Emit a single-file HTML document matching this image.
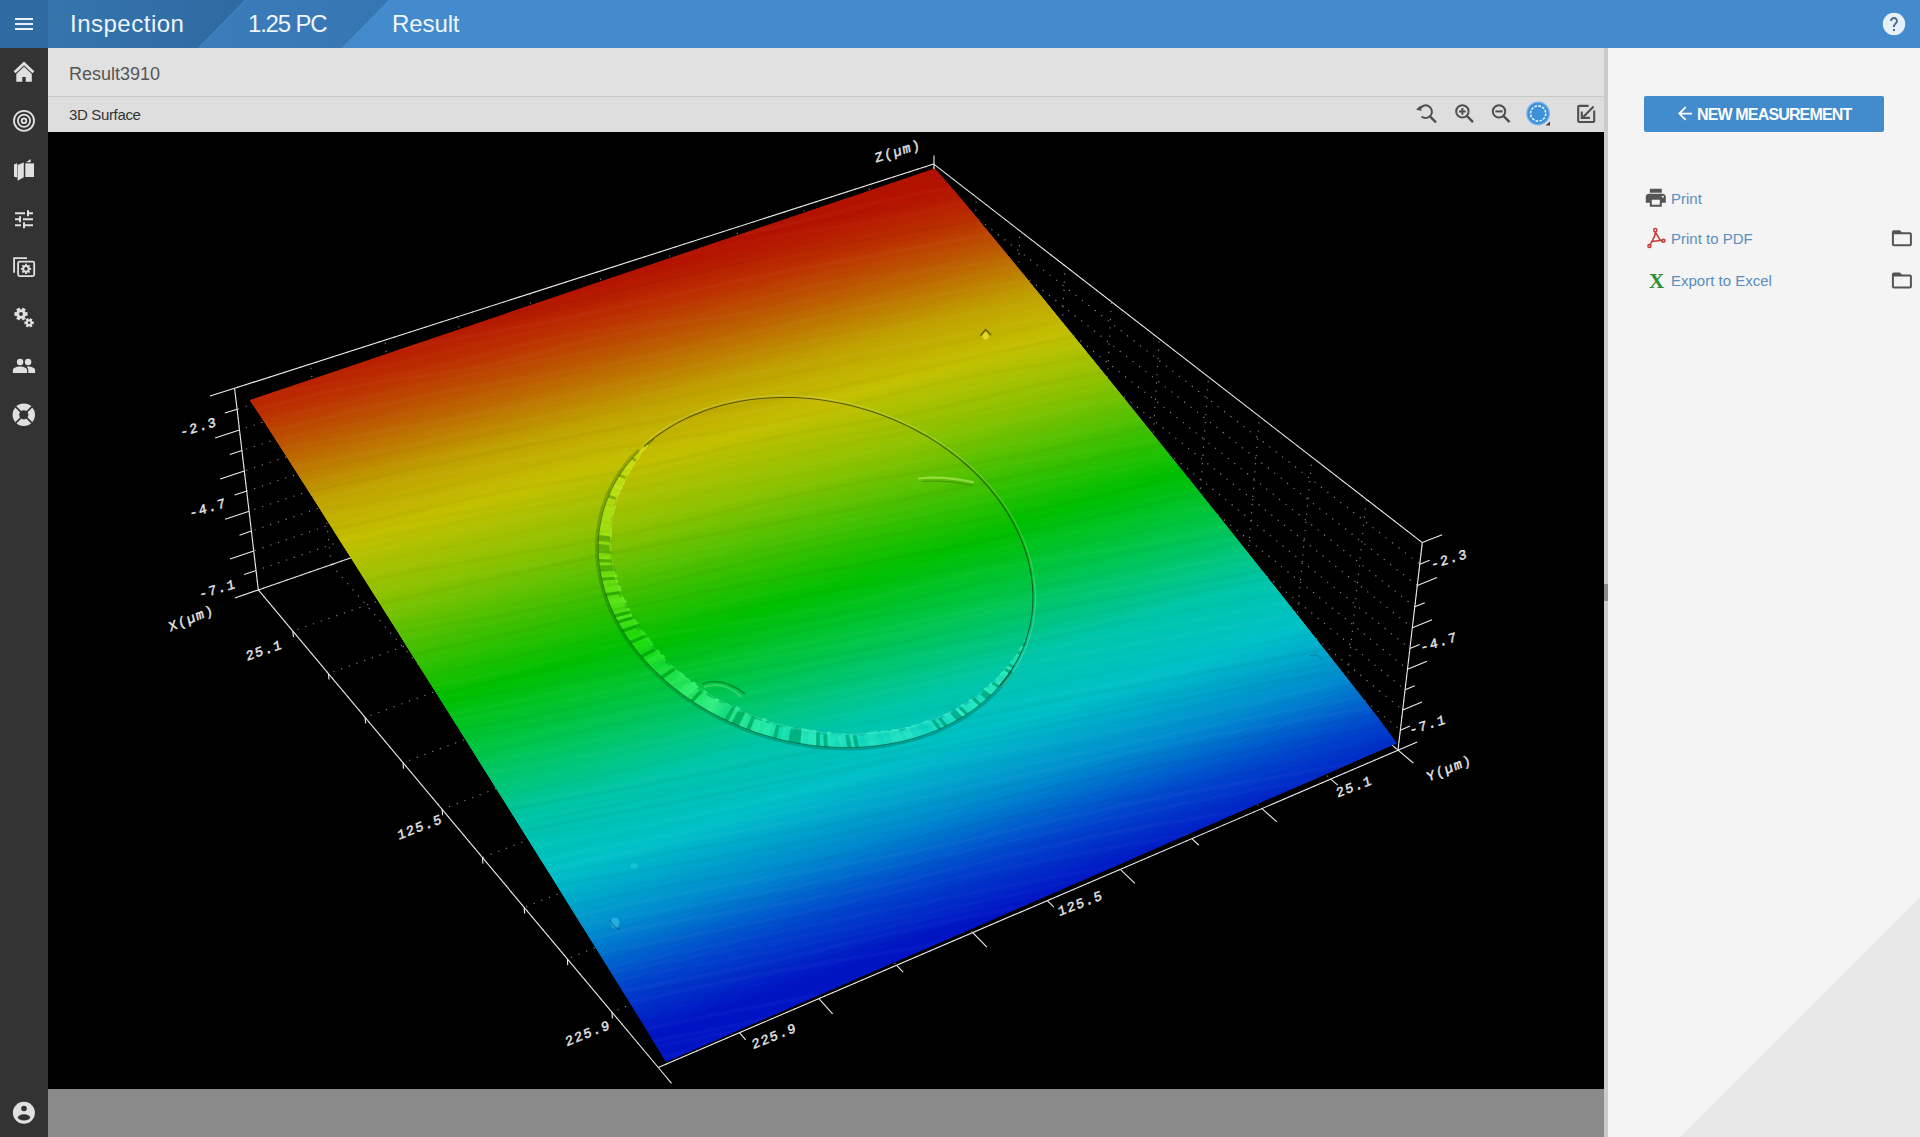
<!DOCTYPE html>
<html><head><meta charset="utf-8">
<style>
*{box-sizing:border-box;margin:0;padding:0}
html,body{width:1920px;height:1137px;overflow:hidden;background:#f4f4f4;font-family:"Liberation Sans",sans-serif}
#hdr{position:absolute;left:0;top:0;width:1920px;height:48px;background:#438bcd}
#hdr svg{position:absolute;left:0;top:0}
.crumb{position:absolute;top:0;height:48px;line-height:48px;color:#eef5fc;font-size:24px;white-space:nowrap}
#side{position:absolute;left:0;top:48px;width:48px;height:1089px;background:#333333}
#side svg{position:absolute;left:0;top:-48px}
#title{position:absolute;left:48px;top:48px;width:1556px;height:49px;background:#e1e1e1;border-bottom:1px solid #c9c9c9}
#title span{position:absolute;left:21px;top:15px;font-size:18px;color:#555;line-height:22px}
#tool{position:absolute;left:48px;top:97px;width:1556px;height:35px;background:#dedede}
#tool span{position:absolute;left:21px;top:9px;font-size:15px;color:#333;line-height:18px;letter-spacing:-0.35px}
#tool svg{position:absolute;left:0;top:0}
#plot{position:absolute;left:48px;top:132px;width:1556px;height:957px;background:#000}
#plot svg{position:absolute;left:0;top:0}
#bot{position:absolute;left:48px;top:1089px;width:1556px;height:48px;background:#8a8a8a}
#scr{position:absolute;left:1604px;top:48px;width:4px;height:1089px;background:#cbcbcb}
#thumb{position:absolute;left:1604px;top:584px;width:4px;height:17px;background:#8c8c8c}
#rp{position:absolute;left:1608px;top:48px;width:312px;height:1089px;background:#f4f4f4;overflow:hidden}
#rp svg{position:absolute;left:0;top:0}
#btn{position:absolute;left:36px;top:48px;width:240px;height:36px;background:#428bcd;border-radius:2px;color:#fff;font-weight:bold;font-size:16px;line-height:37px}
#btn span{position:absolute;left:53px;top:0;letter-spacing:-0.85px}
.it{position:absolute;left:63px;font-size:15px;color:#5b8dbf;line-height:18px;white-space:nowrap;margin-top:1px}
</style></head><body>
<div id="hdr">
<svg width="1920" height="48">
<defs>
<linearGradient id="g1" x1="0" x2="1" y1="0" y2="0"><stop offset="0" stop-color="#3574ad"/><stop offset="1" stop-color="#2f6aa2"/></linearGradient>
<linearGradient id="g2" x1="0" x2="1" y1="0" y2="0"><stop offset="0" stop-color="#3e82c1"/><stop offset="1" stop-color="#3676b2"/></linearGradient>
</defs>
<rect x="0" y="0" width="1920" height="48" fill="#438bcd"/>
<path d="M48 0H389.4L342.5 48H48z" fill="url(#g2)"/>
<path d="M48 0H245.6L198.7 48H48z" fill="url(#g1)"/>
<rect x="0" y="0" width="48" height="48" fill="#306aa2"/>
<path d="M245.6 0L198.7 48" stroke="#5a9ad6" stroke-width="1" opacity="0.6"/>
<path d="M389.4 0L342.5 48" stroke="#5a9ad6" stroke-width="1" opacity="0.6"/>
<rect x="15" y="18" width="18" height="2" fill="#e8f1fa"/>
<rect x="15" y="23" width="18" height="2" fill="#e8f1fa"/>
<rect x="15" y="28" width="18" height="2" fill="#e8f1fa"/>
<circle cx="1894" cy="24" r="11.2" fill="#e6f0fa"/>
<g transform="translate(1882.1 12.1) scale(0.99)" fill="#47698c"><path d="M13 19h-2v-2h2v2zm2.07-7.75l-.9.92C13.45 12.9 13 13.5 13 15h-2v-.5c0-1.1.45-2.1 1.17-2.83l1.24-1.26c.37-.36.59-.86.59-1.41 0-1.1-.9-2-2-2s-2 .9-2 2H8c0-2.21 1.79-4 4-4s4 1.79 4 4c0 .88-.36 1.68-.93 2.25z"/></g>
</svg>
<div class="crumb" style="left:70px;letter-spacing:0.5px">Inspection</div>
<div class="crumb" style="left:248px;letter-spacing:-1.2px">1.25 PC</div>
<div class="crumb" style="left:392px;letter-spacing:-0.1px">Result</div>
</div>
<div id="side">
<svg width="48" height="1137">
<g fill="#e0e0e0">
<path d="M14.6 72.2L24 63.4L33.4 72.2" fill="none" stroke="#e0e0e0" stroke-width="2.8"/>
<path d="M16.3 74L24 66.8L31.8 74V81.8H25.7V77H22.3V81.8H16.3z"/>
</g>
<g fill="none" stroke="#e0e0e0" stroke-width="1.8">
<circle cx="24" cy="120.8" r="10"/>
<circle cx="24" cy="120.8" r="6.1"/>
<circle cx="24" cy="120.8" r="2.3"/>
</g>
<g fill="#e0e0e0">
<path d="M14 164.5L17.2 163.2V177.5L14 176.8z"/>
<path d="M17.6 165L23.8 162.6V177.2L17.6 180.8z"/>
<path d="M25.3 163.4H34V177H25.3z"/>
<path d="M26.2 162.2L30.6 158.9V162.2z"/>
</g>
<g transform="translate(12 207.3)" fill="#e0e0e0"><path d="M3 17v2h6v-2H3zM3 5v2h10V5H3zm10 16v-2h8v-2h-8v-2h-2v6h2zM7 9v2H3v2h4v2h2V9H7zm14 4v-2H11v2h10zm-6-4h2V7h4V5h-4V3h-2v6z"/></g>
<g fill="none" stroke="#e0e0e0" stroke-width="1.8">
<path d="M14.1 272.8V258.2H27"/>
<rect x="18.1" y="261.7" width="16.1" height="14.4" rx="1.5"/>
</g>
<g fill="#e0e0e0" transform="translate(26 268.9)">
<path fill-rule="evenodd" d="M3.81 -0.82L5.12 -0.91L5.12 0.91L3.81 0.82L3.28 2.12L4.27 2.97L2.97 4.27L2.12 3.28L0.82 3.81L0.91 5.12L-0.91 5.12L-0.82 3.81L-2.12 3.28L-2.97 4.27L-4.27 2.97L-3.28 2.12L-3.81 0.82L-5.12 0.91L-5.12 -0.91L-3.81 -0.82L-3.28 -2.12L-4.27 -2.97L-2.97 -4.27L-2.12 -3.28L-0.82 -3.81L-0.91 -5.12L0.91 -5.12L0.82 -3.81L2.12 -3.28L2.97 -4.27L4.27 -2.97L3.28 -2.12zM1.80 0a1.80 1.80 0 1 0 -3.60 0a1.80 1.80 0 1 0 3.60 0z"/>
</g>
<g fill="#e0e0e0" transform="translate(21 314)">
<path fill-rule="evenodd" d="M4.61 -1.66L6.52 -1.93L6.52 1.93L4.61 1.66L3.74 3.16L4.93 4.68L1.59 6.61L0.87 4.82L-0.87 4.82L-1.59 6.61L-4.93 4.68L-3.74 3.16L-4.61 1.66L-6.52 1.93L-6.52 -1.93L-4.61 -1.66L-3.74 -3.16L-4.93 -4.68L-1.59 -6.61L-0.87 -4.82L0.87 -4.82L1.59 -6.61L4.93 -4.68L3.74 -3.16zM1.90 0a1.90 1.90 0 1 0 -3.80 0a1.90 1.90 0 1 0 3.80 0z"/>
</g>
<g fill="#e0e0e0" transform="translate(29.1 322.8)">
<path fill-rule="evenodd" d="M3.29 -1.19L4.70 -1.39L4.70 1.39L3.29 1.19L2.67 2.26L3.55 3.37L1.14 4.76L0.62 3.44L-0.62 3.44L-1.14 4.76L-3.55 3.37L-2.67 2.26L-3.29 1.19L-4.70 1.39L-4.70 -1.39L-3.29 -1.19L-2.67 -2.26L-3.55 -3.37L-1.14 -4.76L-0.62 -3.44L0.62 -3.44L1.14 -4.76L3.55 -3.37L2.67 -2.26zM1.30 0a1.30 1.30 0 1 0 -2.60 0a1.30 1.30 0 1 0 2.60 0z"/>
</g>
<g fill="#e0e0e0">
<circle cx="20.1" cy="362" r="3.2"/>
<circle cx="28.1" cy="362" r="3.2"/>
<path d="M12.9 372.9V370.3C12.9 367.9 16.8 366.6 20 366.6C23.2 366.6 27.1 367.9 27.1 370.3V372.9z"/>
<path d="M28.3 372.9V370.3C28.3 368.8 27.8 367.6 26.6 366.8C27.2 366.7 27.6 366.6 28.1 366.6C31.3 366.6 35.1 367.9 35.1 370.3V372.9z"/>
</g>
<g>
<circle cx="23.8" cy="414.8" r="11.2" fill="#e0e0e0"/>
<circle cx="23.8" cy="414.8" r="4.6" fill="#333"/>
<path d="M15.8 406.8L31.8 422.8M31.8 406.8L15.8 422.8" stroke="#333" stroke-width="1.7"/>
</g>
<g>
<circle cx="23.9" cy="1112.8" r="11" fill="#e0e0e0"/>
<circle cx="24" cy="1108.5" r="2.8" fill="#333"/>
<ellipse cx="24" cy="1117.4" rx="6.1" ry="3.1" fill="#333"/>
</g>

</svg>
</div>
<div id="title"><span>Result3910</span></div>
<div id="tool"><span>3D Surface</span>
<svg width="1556" height="35">
<g transform="translate(-48 -97)"><g fill="none" stroke="#505050" stroke-width="2">
<path d="M1419.8 109.2A6.3 6.3 0 1 1 1421.5 116.4"/>
<path d="M1430.2 116.6L1436 122.4" stroke-width="2.4"/>
<circle cx="1462.4" cy="111.4" r="6.2"/>
<path d="M1466.8 115.8L1473 122.2" stroke-width="2.4"/>
<path d="M1459 111.4H1465.8M1462.4 108V114.8"/>
<circle cx="1499" cy="111.4" r="6.2"/>
<path d="M1503.4 115.8L1509.6 122.2" stroke-width="2.4"/>
<path d="M1495.4 111.4H1502.6"/>
<path d="M1588.6 105.9H1579.2Q1578.2 105.9 1578.2 106.9V121Q1578.2 122 1579.2 122H1593.2Q1594.2 122 1594.2 121V110.6" stroke-width="2.1"/>
<path d="M1593.6 106.6L1582 118.2" stroke-width="2.1"/><path d="M1581.8 111.6V117.9H1589.9" stroke-width="2.1"/>
</g>
<path d="M1416 109.5L1420.3 105.7L1421.6 111z" fill="#505050"/>
<circle cx="1538.1" cy="113.5" r="11.3" fill="#3e90d8" stroke="#7ab6ea" stroke-width="1.2"/>
<circle cx="1538.1" cy="113.5" r="7.6" fill="none" stroke="#e8f3fc" stroke-width="1.6" stroke-dasharray="2.6 1.38"/>
<path d="M1545.5 125.6H1550V121.4z" fill="#4a3a30"/>
</g>
</svg>
</div>
<div id="plot">
<svg width="1556" height="957" viewBox="48 132 1556 957">
<g stroke="#8a8a8a" stroke-width="1.1" stroke-dasharray="1.2 7" fill="none"><path d="M930.3,356.8L258.3,589.9" /><path d="M930.3,356.8L1398,750.2" /><path d="M930.3,356.8L933.7,164.1" /><path d="M930.3,356.8L933.7,164.1" /><path d="M971.2,391.2L292.8,631.2" /><path d="M868.2,378.3L1330.7,779.1" /><path d="M868.2,378.3L869.3,184.7" /><path d="M971.2,391.2L976.2,197" /><path d="M1013.2,426.5L328.4,673.6" /><path d="M805.1,400.2L1261.9,808.6" /><path d="M805.1,400.2L803.9,205.7" /><path d="M1013.2,426.5L1019.9,230.9" /><path d="M1056.5,462.9L365.1,717.4" /><path d="M740.9,422.5L1191.8,838.7" /><path d="M740.9,422.5L737.2,227.1" /><path d="M1056.5,462.9L1065,265.8" /><path d="M1101,500.4L403,762.7" /><path d="M675.6,445.1L1120.3,869.3" /><path d="M675.6,445.1L669.3,248.9" /><path d="M1101,500.4L1111.4,301.8" /><path d="M1146.9,539L442.1,809.3" /><path d="M609.2,468.2L1047.3,900.7" /><path d="M609.2,468.2L600.2,271" /><path d="M1146.9,539L1159.2,338.8" /><path d="M1194.1,578.7L482.5,857.6" /><path d="M541.5,491.7L972.7,932.6" /><path d="M541.5,491.7L529.8,293.6" /><path d="M1194.1,578.7L1208.6,377" /><path d="M1242.7,619.6L524.2,907.4" /><path d="M472.6,515.6L896.6,965.3" /><path d="M472.6,515.6L458.1,316.6" /><path d="M1242.7,619.6L1259.5,416.5" /><path d="M1292.9,661.8L567.4,959" /><path d="M402.5,539.9L818.9,998.6" /><path d="M402.5,539.9L385,340" /><path d="M1292.9,661.8L1312,457.2" /><path d="M1344.6,705.3L612,1012.3" /><path d="M331.1,564.7L739.4,1032.7" /><path d="M331.1,564.7L310.5,363.9" /><path d="M1344.6,705.3L1366.3,499.2" /><path d="M1398,750.2L658.3,1067.5" /><path d="M258.3,589.9L658.3,1067.5" /><path d="M258.3,589.9L234.6,388.3" /><path d="M1398,750.2L1422.3,542.6" /><path d="M930.3,356.8L258.3,589.9" /><path d="M930.3,356.8L1398,750.2" /><path d="M930.6,338.1L256.1,570.5" /><path d="M930.6,338.1L1400.4,730.2" /><path d="M930.9,319.3L253.7,550.9" /><path d="M930.9,319.3L1402.7,710.1" /><path d="M931.2,300.4L251.4,531.1" /><path d="M931.2,300.4L1405.1,689.8" /><path d="M931.6,281.4L249.1,511.2" /><path d="M931.6,281.4L1407.5,669.3" /><path d="M931.9,262.2L246.7,491.1" /><path d="M931.9,262.2L1409.9,648.6" /><path d="M932.3,242.9L244.3,470.9" /><path d="M932.3,242.9L1412.4,627.8" /><path d="M932.6,223.4L241.9,450.5" /><path d="M932.6,223.4L1414.8,606.8" /><path d="M933,203.8L239.5,429.9" /><path d="M933,203.8L1417.3,585.6" /><path d="M933.3,184L237.1,409.2" /><path d="M933.3,184L1419.8,564.2" /><path d="M933.7,164.1L234.6,388.3" /><path d="M933.7,164.1L1422.3,542.6" /></g>
<g stroke="#e6e6e6" stroke-width="1.1" fill="none"><path d="M258.3,589.9L930.3,356.8" /><path d="M1398,750.2L930.3,356.8" /></g>
<clipPath id="sq"><path d="M249.6,400.3L280.5,389.8L311.2,379.5L341.6,369.2L371.9,358.9L401.9,348.8L431.7,338.7L461.4,328.7L490.8,318.7L520,308.8L549,299L577.8,289.3L606.4,279.6L634.8,270L663,260.5L691,251L718.8,241.6L746.5,232.2L773.9,222.9L801.2,213.7L828.3,204.5L855.2,195.4L881.9,186.4L908.4,177.4L934.8,168.5L953.8,190L972,211.6L990.1,233.4L1008.2,255.5L1026.5,277.7L1044.8,300.2L1063.3,322.9L1081.9,345.7L1100.6,368.8L1119.4,392.1L1138.4,415.7L1157.5,439.4L1176.8,463.4L1196.2,487.6L1215.8,512.1L1235.5,536.8L1255.3,561.7L1275.3,586.8L1295.4,612.3L1315.7,637.9L1336.1,663.9L1356.6,690L1377.2,716.5L1396.9,743.2L1369,755.3L1341,767.6L1312.7,779.9L1284.2,792.3L1255.5,804.8L1226.6,817.5L1197.4,830.2L1168.1,843L1138.5,855.9L1108.7,868.9L1078.6,882L1048.3,895.2L1017.8,908.5L987.1,921.9L956.1,935.4L924.8,949L893.3,962.8L861.6,976.6L829.6,990.5L797.3,1004.6L764.8,1018.8L732,1033.1L699,1047.5L665.7,1062L647,1030.9L628,1000.2L609.2,969.8L590.5,939.8L571.9,910L553.6,880.6L535.4,851.5L517.4,822.7L499.5,794.2L481.8,766L464.3,738.1L447,710.5L429.8,683.2L412.7,656.2L395.9,629.4L379.1,602.9L362.6,576.7L346.1,550.7L329.8,525L313.7,499.6L297.6,474.4L281.7,449.4L265.8,424.8z"/></clipPath>
<g clip-path="url(#sq)"><path d="M220.5,354L930.7,163.4L936.4,169.9L225.1,361.4z" fill="#b41200"/><path d="M222.8,357.7L933.3,166.7L939.4,173.2L227.4,365.1z" fill="#b41200"/><path d="M225.1,361.4L936.4,169.9L942.3,176.5L229.8,368.8z" fill="#b41200"/><path d="M227.4,365.1L939.4,173.2L945.2,179.8L232.1,372.5z" fill="#b41200"/><path d="M229.8,368.8L942.3,176.5L948,183.1L234.4,376.2z" fill="#b41200"/><path d="M232.1,372.5L945.2,179.8L950.9,186.4L236.8,379.9z" fill="#b41200"/><path d="M234.4,376.2L948,183.1L953.7,189.8L239.1,383.6z" fill="#b41200"/><path d="M236.8,379.9L950.9,186.4L956.5,193.1L241.4,387.3z" fill="#b41400"/><path d="M239.1,383.6L953.7,189.8L959.3,196.4L243.8,391z" fill="#b51700"/><path d="M241.4,387.3L956.5,193.1L962,199.7L246.1,394.8z" fill="#b61a00"/><path d="M243.8,391L959.3,196.4L964.8,203.1L248.5,398.5z" fill="#b71d00"/><path d="M246.1,394.8L962,199.7L967.6,206.4L251.1,402.3z" fill="#b82000"/><path d="M248.5,398.5L964.8,203.1L970.4,209.7L253.6,406z" fill="#b92400"/><path d="M251.1,402.3L967.6,206.4L973.2,213.1L256.1,409.8z" fill="#ba2700"/><path d="M253.6,406L970.4,209.7L976,216.4L258.5,413.5z" fill="#ba2a00"/><path d="M256.1,409.8L973.2,213.1L978.8,219.8L261,417.3z" fill="#bb2d00"/><path d="M258.5,413.5L976,216.4L981.5,223.2L263.4,421.1z" fill="#bc3100"/><path d="M261,417.3L978.8,219.8L984.3,226.5L265.9,424.8z" fill="#bc3500"/><path d="M263.4,421.1L981.5,223.2L987.1,229.9L268.3,428.6z" fill="#bc3a00"/><path d="M265.9,424.8L984.3,226.5L989.9,233.3L270.7,432.4z" fill="#bc3f00"/><path d="M268.3,428.6L987.1,229.9L992.7,236.6L273.2,436.2z" fill="#bc4300"/><path d="M270.7,432.4L989.9,233.3L995.5,240L275.6,440z" fill="#bc4800"/><path d="M273.2,436.2L992.7,236.6L998.3,243.4L278.1,443.8z" fill="#bc4d00"/><path d="M275.6,440L995.5,240L1001.1,246.8L280.5,447.6z" fill="#bc5100"/><path d="M278.1,443.8L998.3,243.4L1003.9,250.2L283,451.5z" fill="#bc5600"/><path d="M280.5,447.6L1001.1,246.8L1006.7,253.6L285.4,455.3z" fill="#bc5b00"/><path d="M283,451.5L1003.9,250.2L1009.5,257L287.9,459.1z" fill="#bc6000"/><path d="M285.4,455.3L1006.7,253.6L1012.3,260.4L290.3,462.9z" fill="#bd6600"/><path d="M287.9,459.1L1009.5,257L1015.1,263.8L292.8,466.8z" fill="#bd6b00"/><path d="M290.3,462.9L1012.3,260.4L1017.9,267.3L295.2,470.6z" fill="#bd7100"/><path d="M292.8,466.8L1015.1,263.8L1020.7,270.7L297.7,474.5z" fill="#be7600"/><path d="M295.2,470.6L1017.9,267.3L1023.5,274.1L300.1,478.4z" fill="#be7b00"/><path d="M297.7,474.5L1020.7,270.7L1026.3,277.6L302.6,482.2z" fill="#be8100"/><path d="M300.1,478.4L1023.5,274.1L1029.1,281L305.1,486.1z" fill="#be8600"/><path d="M302.6,482.2L1026.3,277.6L1032,284.5L307.5,490z" fill="#bf8c00"/><path d="M305.1,486.1L1029.1,281L1034.8,287.9L310,493.9z" fill="#bf9100"/><path d="M307.5,490L1032,284.5L1037.6,291.4L312.5,497.7z" fill="#bf9700"/><path d="M310,493.9L1034.8,287.9L1040.4,294.8L315,501.6z" fill="#c09c00"/><path d="M312.5,497.7L1037.6,291.4L1043.3,298.3L317.4,505.5z" fill="#c0a100"/><path d="M315,501.6L1040.4,294.8L1046.1,301.8L319.9,509.4z" fill="#c0a400"/><path d="M317.4,505.5L1043.3,298.3L1048.9,305.2L322.4,513.4z" fill="#c1a700"/><path d="M319.9,509.4L1046.1,301.8L1051.8,308.7L324.9,517.3z" fill="#c1aa00"/><path d="M322.4,513.4L1048.9,305.2L1054.6,312.2L327.4,521.2z" fill="#c2ad00"/><path d="M324.9,517.3L1051.8,308.7L1057.5,315.7L329.9,525.1z" fill="#c2b000"/><path d="M327.4,521.2L1054.6,312.2L1060.3,319.2L332.4,529.1z" fill="#c2b200"/><path d="M329.9,525.1L1057.5,315.7L1063.1,322.7L334.9,533z" fill="#c3b500"/><path d="M332.4,529.1L1060.3,319.2L1066,326.2L337.4,537z" fill="#c3b800"/><path d="M334.9,533L1063.1,322.7L1068.9,329.7L339.9,540.9z" fill="#c3bb00"/><path d="M337.4,537L1066,326.2L1071.7,333.2L342.4,544.9z" fill="#c4be00"/><path d="M339.9,540.9L1068.9,329.7L1074.6,336.8L344.9,548.9z" fill="#c3c000"/><path d="M342.4,544.9L1071.7,333.2L1077.4,340.3L347.5,552.8z" fill="#bfc000"/><path d="M344.9,548.9L1074.6,336.8L1080.3,343.8L350,556.8z" fill="#bbc000"/><path d="M347.5,552.8L1077.4,340.3L1083.2,347.3L352.5,560.8z" fill="#b7c000"/><path d="M350,556.8L1080.3,343.8L1086.1,350.9L355,564.8z" fill="#b3c100"/><path d="M352.5,560.8L1083.2,347.3L1088.9,354.4L357.6,568.8z" fill="#afc100"/><path d="M355,564.8L1086.1,350.9L1091.8,358L360.1,572.8z" fill="#abc100"/><path d="M357.6,568.8L1088.9,354.4L1094.7,361.5L362.6,576.8z" fill="#a7c100"/><path d="M360.1,572.8L1091.8,358L1097.6,365.1L365.2,580.8z" fill="#a3c100"/><path d="M362.6,576.8L1094.7,361.5L1100.5,368.7L367.7,584.9z" fill="#9fc100"/><path d="M365.2,580.8L1097.6,365.1L1103.4,372.2L370.3,588.9z" fill="#9bc100"/><path d="M367.7,584.9L1100.5,368.7L1106.2,375.8L372.8,592.9z" fill="#97c200"/><path d="M370.3,588.9L1103.4,372.2L1109.1,379.4L375.4,597z" fill="#93c200"/><path d="M372.8,592.9L1106.2,375.8L1112,383L378,601z" fill="#8fc200"/><path d="M375.4,597L1109.1,379.4L1115,386.6L380.5,605.1z" fill="#8ac200"/><path d="M378,601L1112,383L1117.9,390.2L383.1,609.1z" fill="#84c200"/><path d="M380.5,605.1L1115,386.6L1120.8,393.8L385.6,613.2z" fill="#7fc200"/><path d="M383.1,609.1L1117.9,390.2L1123.7,397.4L388.2,617.3z" fill="#79c200"/><path d="M385.6,613.2L1120.8,393.8L1126.6,401L390.8,621.4z" fill="#73c100"/><path d="M388.2,617.3L1123.7,397.4L1129.5,404.6L393.4,625.4z" fill="#6ec100"/><path d="M390.8,621.4L1126.6,401L1132.4,408.3L396,629.5z" fill="#68c100"/><path d="M393.4,625.4L1129.5,404.6L1135.4,411.9L398.6,633.6z" fill="#62c100"/><path d="M396,629.5L1132.4,408.3L1138.3,415.5L401.1,637.7z" fill="#5cc100"/><path d="M398.6,633.6L1135.4,411.9L1141.2,419.2L403.7,641.9z" fill="#57c100"/><path d="M401.1,637.7L1138.3,415.5L1144.2,422.8L406.3,646z" fill="#51c100"/><path d="M403.7,641.9L1141.2,419.2L1147.1,426.5L408.9,650.1z" fill="#4bc000"/><path d="M406.3,646L1144.2,422.8L1150.1,430.1L411.5,654.2z" fill="#46c000"/><path d="M408.9,650.1L1147.1,426.5L1153,433.8L414.2,658.4z" fill="#40c000"/><path d="M411.5,654.2L1150.1,430.1L1156,437.4L416.8,662.5z" fill="#3ac000"/><path d="M414.2,658.4L1153,433.8L1158.9,441.1L419.4,666.7z" fill="#35c000"/><path d="M416.8,662.5L1156,437.4L1161.9,444.8L422,670.8z" fill="#2fc000"/><path d="M419.4,666.7L1158.9,441.1L1164.8,448.5L424.6,675z" fill="#2ac000"/><path d="M422,670.8L1161.9,444.8L1167.8,452.2L427.3,679.2z" fill="#24c000"/><path d="M424.6,675L1164.8,448.5L1170.7,455.9L429.9,683.4z" fill="#1fc000"/><path d="M427.3,679.2L1167.8,452.2L1173.7,459.6L432.5,687.5z" fill="#19c000"/><path d="M429.9,683.4L1170.7,455.9L1176.7,463.3L435.2,691.7z" fill="#14c000"/><path d="M432.5,687.5L1173.7,459.6L1179.7,467L437.8,695.9z" fill="#0ec000"/><path d="M435.2,691.7L1176.7,463.3L1182.6,470.7L440.5,700.1z" fill="#09c000"/><path d="M437.8,695.9L1179.7,467L1185.6,474.4L443.1,704.4z" fill="#03c000"/><path d="M440.5,700.1L1182.6,470.7L1188.6,478.1L445.8,708.6z" fill="#00c002"/><path d="M443.1,704.4L1185.6,474.4L1191.6,481.9L448.4,712.8z" fill="#00c108"/><path d="M445.8,708.6L1188.6,478.1L1194.6,485.6L451.1,717z" fill="#00c10d"/><path d="M448.4,712.8L1191.6,481.9L1197.6,489.4L453.7,721.3z" fill="#00c213"/><path d="M451.1,717L1194.6,485.6L1200.6,493.1L456.4,725.5z" fill="#00c219"/><path d="M453.7,721.3L1197.6,489.4L1203.6,496.9L459.1,729.8z" fill="#00c31e"/><path d="M456.4,725.5L1200.6,493.1L1206.6,500.6L461.8,734z" fill="#00c324"/><path d="M459.1,729.8L1203.6,496.9L1209.6,504.4L464.4,738.3z" fill="#00c429"/><path d="M461.8,734L1206.6,500.6L1212.6,508.2L467.1,742.6z" fill="#00c42f"/><path d="M464.4,738.3L1209.6,504.4L1215.7,511.9L469.8,746.9z" fill="#00c535"/><path d="M467.1,742.6L1212.6,508.2L1218.7,515.7L472.5,751.1z" fill="#00c53a"/><path d="M469.8,746.9L1215.7,511.9L1221.7,519.5L475.2,755.4z" fill="#00c540"/><path d="M472.5,751.1L1218.7,515.7L1224.7,523.3L477.9,759.7z" fill="#00c645"/><path d="M475.2,755.4L1221.7,519.5L1227.8,527.1L480.6,764.1z" fill="#00c64c"/><path d="M477.9,759.7L1224.7,523.3L1230.8,530.9L483.3,768.4z" fill="#00c652"/><path d="M480.6,764.1L1227.8,527.1L1233.8,534.7L486,772.7z" fill="#00c658"/><path d="M483.3,768.4L1230.8,530.9L1236.9,538.5L488.7,777z" fill="#00c65f"/><path d="M486,772.7L1233.8,534.7L1239.9,542.4L491.5,781.4z" fill="#00c665"/><path d="M488.7,777L1236.9,538.5L1243,546.2L494.2,785.7z" fill="#00c66b"/><path d="M491.5,781.4L1239.9,542.4L1246,550L496.9,790.1z" fill="#00c671"/><path d="M494.2,785.7L1243,546.2L1249.1,553.9L499.6,794.4z" fill="#00c678"/><path d="M496.9,790.1L1246,550L1252.1,557.7L502.4,798.8z" fill="#00c67e"/><path d="M499.6,794.4L1249.1,553.9L1255.2,561.6L505.1,803.1z" fill="#00c684"/><path d="M502.4,798.8L1252.1,557.7L1258.3,565.4L507.9,807.5z" fill="#00c68b"/><path d="M505.1,803.1L1255.2,561.6L1261.3,569.3L510.6,811.9z" fill="#00c691"/><path d="M507.9,807.5L1258.3,565.4L1264.4,573.1L513.4,816.3z" fill="#00c697"/><path d="M510.6,811.9L1261.3,569.3L1267.5,577L516.1,820.7z" fill="#00c69d"/><path d="M513.4,816.3L1264.4,573.1L1270.6,580.9L518.9,825.1z" fill="#00c6a4"/><path d="M516.1,820.7L1267.5,577L1273.7,584.8L521.6,829.5z" fill="#00c6a9"/><path d="M518.9,825.1L1270.6,580.9L1276.7,588.7L524.4,834z" fill="#00c5ab"/><path d="M521.6,829.5L1273.7,584.8L1279.8,592.6L527.2,838.4z" fill="#00c5ae"/><path d="M524.4,834L1276.7,588.7L1282.9,596.5L529.9,842.8z" fill="#00c4b0"/><path d="M527.2,838.4L1279.8,592.6L1286,600.4L532.7,847.3z" fill="#00c4b3"/><path d="M529.9,842.8L1282.9,596.5L1289.1,604.3L535.5,851.7z" fill="#00c3b6"/><path d="M532.7,847.3L1286,600.4L1292.2,608.2L538.3,856.2z" fill="#00c3b8"/><path d="M535.5,851.7L1289.1,604.3L1295.3,612.1L541.1,860.6z" fill="#00c2bb"/><path d="M538.3,856.2L1292.2,608.2L1298.5,616.1L543.9,865.1z" fill="#00c2bd"/><path d="M541.1,860.6L1295.3,612.1L1301.6,620L546.7,869.6z" fill="#00c2c0"/><path d="M543.9,865.1L1298.5,616.1L1304.7,624L549.5,874.1z" fill="#00c1c2"/><path d="M546.7,869.6L1301.6,620L1307.8,627.9L552.3,878.6z" fill="#00c1c5"/><path d="M549.5,874.1L1304.7,624L1310.9,631.9L555.1,883.1z" fill="#00c0c8"/><path d="M552.3,878.6L1307.8,627.9L1314.1,635.8L557.9,887.6z" fill="#00bdc8"/><path d="M555.1,883.1L1310.9,631.9L1317.2,639.8L560.7,892.1z" fill="#00b8c9"/><path d="M557.9,887.6L1314.1,635.8L1320.3,643.8L563.6,896.6z" fill="#00b4c9"/><path d="M560.7,892.1L1317.2,639.8L1323.5,647.8L566.4,901.2z" fill="#00b0ca"/><path d="M563.6,896.6L1320.3,643.8L1326.6,651.7L569.2,905.7z" fill="#00acca"/><path d="M566.4,901.2L1323.5,647.8L1329.8,655.7L572.1,910.3z" fill="#00a8cb"/><path d="M569.2,905.7L1326.6,651.7L1332.9,659.7L574.9,914.8z" fill="#00a4cb"/><path d="M572.1,910.3L1329.8,655.7L1336,663.7L577.8,919.4z" fill="#009fcc"/><path d="M574.9,914.8L1332.9,659.7L1339.2,667.8L580.6,923.9z" fill="#009bcc"/><path d="M577.8,919.4L1336,663.7L1342.4,671.8L583.5,928.5z" fill="#0097cd"/><path d="M580.6,923.9L1339.2,667.8L1345.5,675.8L586.3,933.1z" fill="#0093cd"/><path d="M583.5,928.5L1342.4,671.8L1348.7,679.8L589.2,937.7z" fill="#008fce"/><path d="M586.3,933.1L1345.5,675.8L1351.8,683.9L592,942.3z" fill="#008ace"/><path d="M589.2,937.7L1348.7,679.8L1355,687.9L594.9,946.9z" fill="#0083ce"/><path d="M592,942.3L1351.8,683.9L1358.1,692L597.8,951.5z" fill="#007dce"/><path d="M594.9,946.9L1355,687.9L1361.3,696L600.7,956.2z" fill="#0077cd"/><path d="M597.8,951.5L1358.1,692L1364.5,700.1L603.5,960.8z" fill="#0070cd"/><path d="M600.7,956.2L1361.3,696L1367.6,704.1L606.4,965.4z" fill="#006acd"/><path d="M603.5,960.8L1364.5,700.1L1370.8,708.2L609.3,970.1z" fill="#0063cd"/><path d="M606.4,965.4L1367.6,704.1L1374,712.3L612.2,974.7z" fill="#005dcd"/><path d="M609.3,970.1L1370.8,708.2L1377.1,716.4L615.1,979.4z" fill="#0056cc"/><path d="M612.2,974.7L1374,712.3L1380.3,720.5L618,984.1z" fill="#0050cc"/><path d="M615.1,979.4L1377.1,716.4L1383.4,724.6L620.9,988.7z" fill="#004acc"/><path d="M618,984.1L1380.3,720.5L1386.5,728.7L623.8,993.4z" fill="#0044cc"/><path d="M620.9,988.7L1383.4,724.6L1389.6,732.8L626.7,998.1z" fill="#003fcb"/><path d="M623.8,993.4L1386.5,728.7L1392.7,736.9L629.6,1002.8z" fill="#003bca"/><path d="M626.7,998.1L1389.6,732.8L1395.7,741L632.6,1007.5z" fill="#0036c9"/><path d="M629.6,1002.8L1392.7,736.9L1398.5,745.2L635.5,1012.3z" fill="#0032c9"/><path d="M632.6,1007.5L1395.7,741L1401.8,749.3L638.4,1017z" fill="#002dc8"/><path d="M635.5,1012.3L1398.5,745.2L1405.1,753.5L641.3,1021.7z" fill="#0029c7"/><path d="M638.4,1017L1401.8,749.3L1408.5,757.6L644.2,1026.5z" fill="#0024c7"/><path d="M641.3,1021.7L1405.1,753.5L1411.8,761.8L647.2,1031.2z" fill="#001fc6"/><path d="M644.2,1026.5L1408.5,757.6L1415.2,765.9L650.1,1036z" fill="#001bc5"/><path d="M647.2,1031.2L1411.8,761.8L1418.5,770.1L653,1040.7z" fill="#0016c4"/><path d="M650.1,1036L1415.2,765.9L1421.9,774.3L655.9,1045.5z" fill="#0014c4"/><path d="M653,1040.7L1418.5,770.1L1425.2,778.5L658.8,1050.3z" fill="#0014c4"/><path d="M655.9,1045.5L1421.9,774.3L1428.6,782.6L661.7,1055.1z" fill="#0014c4"/><path d="M658.8,1050.3L1425.2,778.5L1432,786.8L664.6,1059.9z" fill="#0014c4"/><path d="M661.7,1055.1L1428.6,782.6L1435.4,791L667.4,1064.7z" fill="#0014c4"/><path d="M664.6,1059.9L1432,786.8L1438.8,795.3L670.4,1069.5z" fill="#0014c4"/><path d="M667.4,1064.7L1435.4,791L1438.8,795.3L670.4,1069.5z" fill="#0014c4"/></g>
<clipPath id="cq"><path d="M934.9,731L944.5,726.7L953.8,722L962.6,716.9L971,711.4L978.9,705.5L986.4,699.2L993.3,692.6L999.7,685.6L1005.6,678.3L1011,670.8L1015.8,662.9L1020,654.9L1023.6,646.6L1026.6,638.1L1029.1,629.5L1031,620.7L1032.2,611.8L1032.9,602.8L1032.9,593.8L1032.4,584.7L1031.3,575.6L1029.6,566.5L1027.4,557.5L1024.5,548.5L1021.1,539.5L1017.2,530.7L1012.8,522L1007.8,513.5L1002.4,505.1L996.4,497L990,489L983.2,481.3L975.9,473.8L968.2,466.5L960.2,459.6L951.7,453L943,446.6L933.9,440.6L924.5,435L914.9,429.7L905,424.8L894.9,420.2L884.6,416L874.1,412.3L863.5,408.9L852.7,406L841.9,403.5L831,401.4L820.1,399.8L809.1,398.6L798.2,397.8L787.3,397.5L776.4,397.6L765.7,398.2L755.1,399.2L744.6,400.6L734.3,402.5L724.2,404.8L714.4,407.6L704.7,410.8L695.4,414.4L686.3,418.4L677.6,422.9L669.2,427.7L661.2,432.9L653.6,438.5L646.4,444.4L639.6,450.7L633.3,457.3L627.5,464.2L622.1,471.5L617.2,479L612.9,486.8L609.1,494.8L605.9,503L603.2,511.5L601,520.1L599.5,528.9L598.6,537.9L598.2,546.9L598.5,556.1L599.3,565.3L600.8,574.5L602.8,583.8L605.5,593L608.8,602.2L612.6,611.3L617,620.4L622.1,629.3L627.6,638.1L633.7,646.7L640.4,655.1L647.6,663.2L655.2,671.2L663.4,678.8L672,686.2L681,693.2L690.4,699.9L700.2,706.2L710.4,712.1L720.8,717.6L731.6,722.7L742.6,727.4L753.8,731.6L765.3,735.3L776.8,738.6L788.5,741.3L800.3,743.6L812.1,745.4L823.9,746.6L835.7,747.3L847.5,747.5L859.1,747.2L870.6,746.4L881.9,745.1L893.1,743.2L904,740.9L914.6,738.1L924.9,734.8z"/></clipPath>
<g clip-path="url(#cq)"><path d="M305.7,489.5L1027.7,284L1033.2,290.9L310.6,497.2z" fill="#bf8c00"/><path d="M308.1,493.4L1030.5,287.5L1036,294.4L313,501.1z" fill="#bf9100"/><path d="M310.6,497.2L1033.2,290.9L1038.8,297.8L315.5,505z" fill="#bf9700"/><path d="M313,501.1L1036,294.4L1041.6,301.3L317.9,508.9z" fill="#c09c00"/><path d="M315.5,505L1038.8,297.8L1044.4,304.8L320.4,512.9z" fill="#c0a100"/><path d="M317.9,508.9L1041.6,301.3L1047.2,308.3L322.8,516.8z" fill="#c0a400"/><path d="M320.4,512.9L1044.4,304.8L1050,311.8L325.3,520.7z" fill="#c1a700"/><path d="M322.8,516.8L1047.2,308.3L1052.8,315.3L327.8,524.6z" fill="#c1aa00"/><path d="M325.3,520.7L1050,311.8L1055.6,318.7L330.3,528.6z" fill="#c2ad00"/><path d="M327.8,524.6L1052.8,315.3L1058.4,322.2L332.7,532.5z" fill="#c2b000"/><path d="M330.3,528.6L1055.6,318.7L1061.2,325.8L335.2,536.5z" fill="#c2b200"/><path d="M332.7,532.5L1058.4,322.2L1064.1,329.3L337.7,540.4z" fill="#c3b500"/><path d="M335.2,536.5L1061.2,325.8L1066.9,332.8L340.2,544.4z" fill="#c3b800"/><path d="M337.7,540.4L1064.1,329.3L1069.7,336.3L342.7,548.3z" fill="#c3bb00"/><path d="M340.2,544.4L1066.9,332.8L1072.6,339.8L345.2,552.3z" fill="#c4be00"/><path d="M342.7,548.3L1069.7,336.3L1075.4,343.4L347.7,556.3z" fill="#c3c000"/><path d="M345.2,552.3L1072.6,339.8L1078.2,346.9L350.2,560.3z" fill="#bfc000"/><path d="M347.7,556.3L1075.4,343.4L1081.1,350.4L352.7,564.3z" fill="#bbc000"/><path d="M350.2,560.3L1078.2,346.9L1083.9,354L355.2,568.3z" fill="#b7c000"/><path d="M352.7,564.3L1081.1,350.4L1086.8,357.5L357.7,572.3z" fill="#b3c100"/><path d="M355.2,568.3L1083.9,354L1089.7,361.1L360.3,576.3z" fill="#afc100"/><path d="M357.7,572.3L1086.8,357.5L1092.5,364.6L362.8,580.3z" fill="#abc100"/><path d="M360.3,576.3L1089.7,361.1L1095.4,368.2L365.3,584.3z" fill="#a7c100"/><path d="M362.8,580.3L1092.5,364.6L1098.3,371.8L367.9,588.4z" fill="#a3c100"/><path d="M365.3,584.3L1095.4,368.2L1101.1,375.4L370.4,592.4z" fill="#9fc100"/><path d="M367.9,588.4L1098.3,371.8L1104,378.9L372.9,596.4z" fill="#9bc100"/><path d="M370.4,592.4L1101.1,375.4L1106.9,382.5L375.5,600.5z" fill="#97c200"/><path d="M372.9,596.4L1104,378.9L1109.8,386.1L378,604.5z" fill="#93c200"/><path d="M375.5,600.5L1106.9,382.5L1112.7,389.7L380.6,608.6z" fill="#8fc200"/><path d="M378,604.5L1109.8,386.1L1115.6,393.3L383.2,612.7z" fill="#8ac200"/><path d="M380.6,608.6L1112.7,389.7L1118.5,396.9L385.7,616.8z" fill="#84c200"/><path d="M383.2,612.7L1115.6,393.3L1121.4,400.5L388.3,620.8z" fill="#7fc200"/><path d="M385.7,616.8L1118.5,396.9L1124.3,404.2L390.8,624.9z" fill="#79c200"/><path d="M388.3,620.8L1121.4,400.5L1127.2,407.8L393.4,629z" fill="#73c100"/><path d="M390.8,624.9L1124.3,404.2L1130.1,411.4L396,633.1z" fill="#6ec100"/><path d="M393.4,629L1127.2,407.8L1133,415.1L398.6,637.2z" fill="#68c100"/><path d="M396,633.1L1130.1,411.4L1136,418.7L401.2,641.3z" fill="#62c100"/><path d="M398.6,637.2L1133,415.1L1138.9,422.3L403.8,645.5z" fill="#5cc100"/><path d="M401.2,641.3L1136,418.7L1141.8,426L406.4,649.6z" fill="#57c100"/><path d="M403.8,645.5L1138.9,422.3L1144.8,429.6L409,653.7z" fill="#51c100"/><path d="M406.4,649.6L1141.8,426L1147.7,433.3L411.6,657.8z" fill="#4bc000"/><path d="M409,653.7L1144.8,429.6L1150.7,437L414.2,662z" fill="#46c000"/><path d="M411.6,657.8L1147.7,433.3L1153.6,440.6L416.8,666.1z" fill="#40c000"/><path d="M414.2,662L1150.7,437L1156.6,444.3L419.4,670.3z" fill="#3ac000"/><path d="M416.8,666.1L1153.6,440.6L1159.5,448L422,674.5z" fill="#35c000"/><path d="M419.4,670.3L1156.6,444.3L1162.5,451.7L424.6,678.6z" fill="#2fc000"/><path d="M422,674.5L1159.5,448L1165.5,455.4L427.3,682.8z" fill="#2ac000"/><path d="M424.6,678.6L1162.5,451.7L1168.5,459.1L429.9,687z" fill="#24c000"/><path d="M427.3,682.8L1165.5,455.4L1171.4,462.8L432.5,691.2z" fill="#1fc000"/><path d="M429.9,687L1168.5,459.1L1174.4,466.5L435.2,695.4z" fill="#19c000"/><path d="M432.5,691.2L1171.4,462.8L1177.4,470.2L437.8,699.6z" fill="#14c000"/><path d="M435.2,695.4L1174.4,466.5L1180.4,473.9L440.5,703.8z" fill="#0ec000"/><path d="M437.8,699.6L1177.4,470.2L1183.4,477.7L443.1,708z" fill="#09c000"/><path d="M440.5,703.8L1180.4,473.9L1186.4,481.4L445.8,712.3z" fill="#03c000"/><path d="M443.1,708L1183.4,477.7L1189.4,485.1L448.4,716.5z" fill="#00c002"/><path d="M445.8,712.3L1186.4,481.4L1192.4,488.9L451.1,720.7z" fill="#00c108"/><path d="M448.4,716.5L1189.4,485.1L1195.4,492.6L453.8,725z" fill="#00c10d"/><path d="M451.1,720.7L1192.4,488.9L1198.4,496.4L456.4,729.2z" fill="#00c213"/><path d="M453.8,725L1195.4,492.6L1201.5,500.1L459.1,733.5z" fill="#00c219"/><path d="M456.4,729.2L1198.4,496.4L1204.5,503.9L461.8,737.8z" fill="#00c31e"/><path d="M459.1,733.5L1201.5,500.1L1207.5,507.7L464.5,742z" fill="#00c324"/><path d="M461.8,737.8L1204.5,503.9L1210.6,511.4L467.2,746.3z" fill="#00c429"/><path d="M464.5,742L1207.5,507.7L1213.6,515.2L469.9,750.6z" fill="#00c42f"/><path d="M467.2,746.3L1210.6,511.4L1216.6,519L472.6,754.9z" fill="#00c535"/><path d="M469.9,750.6L1213.6,515.2L1219.7,522.8L475.3,759.2z" fill="#00c53a"/><path d="M472.6,754.9L1216.6,519L1222.7,526.6L478,763.5z" fill="#00c540"/><path d="M475.3,759.2L1219.7,522.8L1225.8,530.4L480.7,767.8z" fill="#00c645"/><path d="M478,763.5L1222.7,526.6L1228.9,534.2L483.4,772.1z" fill="#00c64c"/><path d="M480.7,767.8L1225.8,530.4L1231.9,538L486.1,776.5z" fill="#00c652"/><path d="M483.4,772.1L1228.9,534.2L1235,541.9L488.9,780.8z" fill="#00c658"/><path d="M486.1,776.5L1231.9,538L1238.1,545.7L491.6,785.1z" fill="#00c65f"/><path d="M488.9,780.8L1235,541.9L1241.2,549.5L494.3,789.5z" fill="#00c665"/><path d="M491.6,785.1L1238.1,545.7L1244.3,553.4L497.1,793.9z" fill="#00c66b"/><path d="M494.3,789.5L1241.2,549.5L1247.3,557.2L499.8,798.2z" fill="#00c671"/><path d="M497.1,793.9L1244.3,553.4L1250.4,561.1L502.6,802.6z" fill="#00c678"/><path d="M499.8,798.2L1247.3,557.2L1253.5,564.9L505.3,807z" fill="#00c67e"/><path d="M502.6,802.6L1250.4,561.1L1256.6,568.8L508.1,811.3z" fill="#00c684"/><path d="M505.3,807L1253.5,564.9L1259.8,572.6L510.8,815.7z" fill="#00c68b"/><path d="M508.1,811.3L1256.6,568.8L1262.9,576.5L513.6,820.1z" fill="#00c691"/><path d="M510.8,815.7L1259.8,572.6L1266,580.4L516.4,824.5z" fill="#00c697"/><path d="M513.6,820.1L1262.9,576.5L1269.1,584.3L519.2,829z" fill="#00c69d"/><path d="M516.4,824.5L1266,580.4L1272.2,588.2L521.9,833.4z" fill="#00c6a4"/><path d="M519.2,829L1269.1,584.3L1275.4,592.1L524.7,837.8z" fill="#00c6a9"/><path d="M521.9,833.4L1272.2,588.2L1278.5,596L527.5,842.2z" fill="#00c5ab"/><path d="M524.7,837.8L1275.4,592.1L1281.7,599.9L530.3,846.7z" fill="#00c5ae"/><path d="M527.5,842.2L1278.5,596L1284.8,603.8L533.1,851.1z" fill="#00c4b0"/><path d="M530.3,846.7L1281.7,599.9L1288,607.7L535.9,855.6z" fill="#00c4b3"/><path d="M533.1,851.1L1284.8,603.8L1291.1,611.6L538.7,860.1z" fill="#00c3b6"/><path d="M535.9,855.6L1288,607.7L1294.3,615.6L541.5,864.5z" fill="#00c3b8"/><path d="M538.7,860.1L1291.1,611.6L1297.4,619.5L544.3,869z" fill="#00c2bb"/><path d="M541.5,864.5L1294.3,615.6L1300.6,623.5L547.2,873.5z" fill="#00c2bd"/><path d="M544.3,869L1297.4,619.5L1303.8,627.4L550,878z" fill="#00c2c0"/><path d="M547.2,873.5L1300.6,623.5L1307,631.4L552.8,882.5z" fill="#00c1c2"/><path d="M550,878L1303.8,627.4L1310.2,635.3L555.7,887z" fill="#00c1c5"/><path d="M552.8,882.5L1307,631.4L1313.4,639.3L558.5,891.5z" fill="#00c0c8"/><path d="M555.7,887L1310.2,635.3L1316.5,643.3L561.3,896.1z" fill="#00bdc8"/><path d="M558.5,891.5L1313.4,639.3L1319.7,647.2L564.2,900.6z" fill="#00b8c9"/><path d="M561.3,896.1L1316.5,643.3L1323,651.2L567.1,905.1z" fill="#00b4c9"/><path d="M564.2,900.6L1319.7,647.2L1326.2,655.2L569.9,909.7z" fill="#00b0ca"/><path d="M567.1,905.1L1323,651.2L1329.4,659.2L572.8,914.2z" fill="#00acca"/><path d="M569.9,909.7L1326.2,655.2L1332.6,663.2L575.6,918.8z" fill="#00a8cb"/><path d="M572.8,914.2L1329.4,659.2L1335.8,667.2L578.5,923.4z" fill="#00a4cb"/><path d="M575.6,918.8L1332.6,663.2L1339.1,671.3L581.4,927.9z" fill="#009fcc"/><path d="M578.5,923.4L1335.8,667.2L1342.3,675.3L584.3,932.5z" fill="#009bcc"/><path d="M581.4,927.9L1339.1,671.3L1345.5,679.3L587.2,937.1z" fill="#0097cd"/><path d="M584.3,932.5L1342.3,675.3L1348.8,683.4L590.1,941.7z" fill="#0093cd"/></g>
<g stroke="none"><path d="M658.6,434.7L656.4,437.4L655.7,436.8L658.6,434.7z" fill="#c8ce0d"/><path d="M656.7,437L654.2,439.5L653.2,438.7L656.1,436.6z" fill="#c9d10f"/><path d="M654.6,439.2L652.1,441.7L650.8,440.7L653.6,438.5z" fill="#92a600"/><path d="M652.6,441.5L650.3,444.1L648.4,442.7L651.2,440.4z" fill="#92a700"/><path d="M650.6,443.7L648.3,446.3L646.1,444.7L648.8,442.4z" fill="#92a800"/><path d="M648.4,445.8L646.1,448.4L643.8,446.8L646.4,444.4z" fill="#cbd812"/><path d="M646.7,448.3L644.5,450.9L641.5,448.9L644.1,446.5z" fill="#cbd810"/><path d="M644.3,450.2L642,452.8L639.3,451L641.8,448.5z" fill="#ccdd14"/><path d="M642.4,452.5L640.3,455.1L637.2,453.2L639.6,450.7z" fill="#cad80f"/><path d="M641.4,455.3L639.3,458L635.1,455.4L637.5,452.9z" fill="#c9d60c"/><path d="M639.4,457.5L637.4,460.2L633,457.6L635.4,455.1z" fill="#c9d70c"/><path d="M636.8,459.4L634.8,462.1L631,459.9L633.3,457.3z" fill="#93ae00"/><path d="M636,462.3L634.2,465.1L629.1,462.2L631.3,459.6z" fill="#c9d90b"/><path d="M634.2,464.6L632.4,467.4L627.2,464.6L629.4,461.9z" fill="#c9db0d"/><path d="M633,467.2L631.3,470.1L625.3,467L627.5,464.2z" fill="#c9df11"/><path d="M631.1,469.5L629.4,472.3L623.6,469.4L625.6,466.6z" fill="#c7df11"/><path d="M629.9,472.1L628.3,475L621.8,471.8L623.8,469z" fill="#c5dc0e"/><path d="M627.2,474L625.6,476.9L620.2,474.3L622.1,471.5z" fill="#c3dc0e"/><path d="M625.9,476.5L624.3,479.4L618.6,476.8L620.4,473.9z" fill="#8cb000"/><path d="M625.7,479.6L624.3,482.5L617,479.4L618.8,476.4z" fill="#c2e113"/><path d="M624.9,482.4L623.6,485.3L615.5,481.9L617.2,479z" fill="#bfde10"/><path d="M623.1,484.6L621.8,487.6L614.1,484.5L615.7,481.5z" fill="#bedf11"/><path d="M622.6,487.5L621.3,490.5L612.7,487.2L614.3,484.1z" fill="#bfe516"/><path d="M621,489.9L619.8,493L611.4,489.8L612.9,486.8z" fill="#badd0f"/><path d="M619.9,492.5L618.8,495.6L610.1,492.5L611.6,489.4z" fill="#bce415"/><path d="M617.9,494.8L616.8,497.9L608.9,495.2L610.3,492.1z" fill="#b8e112"/><path d="M616.2,497.2L615.1,500.3L607.8,497.9L609.1,494.8z" fill="#80b000"/><path d="M615.5,500L614.6,503.1L606.7,500.7L608,497.5z" fill="#b1da0c"/><path d="M614.7,502.7L613.8,505.9L605.7,503.5L606.9,500.3z" fill="#aed90b"/><path d="M616.3,506.2L615.6,509.3L604.8,506.3L605.9,503z" fill="#abd709"/><path d="M614.6,508.6L613.9,511.8L603.9,509.1L604.9,505.8z" fill="#aedf10"/><path d="M615,511.6L614.4,514.8L603,511.9L604,508.7z" fill="#aadd0e"/><path d="M612.7,513.9L612.1,517.1L602.3,514.8L603.2,511.5z" fill="#ace313"/><path d="M611.4,516.5L610.9,519.8L601.6,517.7L602.4,514.4z" fill="#a7de0f"/><path d="M611.2,519.4L610.7,522.6L601,520.6L601.7,517.2z" fill="#a5df0f"/><path d="M610.9,522.2L610.5,525.5L600.4,523.5L601,520.1z" fill="#a0d90a"/><path d="M611,525.1L610.6,528.4L599.9,526.4L600.5,523.1z" fill="#a0dd0e"/><path d="M611.9,528.2L611.7,531.4L599.5,529.4L600,526z" fill="#9fdf0f"/><path d="M611.7,531L611.5,534.3L599.1,532.3L599.5,528.9z" fill="#99da0b"/><path d="M611.9,533.9L611.8,537.2L598.8,535.3L599.1,531.9z" fill="#9ce111"/><path d="M610.2,536.5L610.2,539.8L598.5,538.3L598.8,534.9z" fill="#68b100"/><path d="M611.2,539.5L611.2,542.8L598.4,541.3L598.6,537.9z" fill="#66b100"/><path d="M609.4,542.1L609.5,545.5L598.3,544.3L598.4,540.9z" fill="#8dd90a"/><path d="M608.8,545L608.9,548.3L598.2,547.4L598.3,543.9z" fill="#60b100"/><path d="M609.1,547.9L609.3,551.2L598.2,550.4L598.2,546.9z" fill="#5eb100"/><path d="M612.7,551L613,554.3L598.3,553.5L598.2,550z" fill="#5bb100"/><path d="M610.2,553.7L610.5,557L598.5,556.5L598.3,553z" fill="#83dc0d"/><path d="M609.9,556.6L610.3,559.9L598.7,559.6L598.5,556.1z" fill="#85e212"/><path d="M611.8,559.5L612.3,562.9L599,562.7L598.7,559.1z" fill="#53b000"/><path d="M610.5,562.4L611.1,565.7L599.4,565.7L599,562.2z" fill="#7bde0f"/><path d="M614.5,565.3L615.1,568.6L599.8,568.8L599.3,565.3z" fill="#4db000"/><path d="M615.6,568.2L616.3,571.4L600.3,571.9L599.7,568.3z" fill="#4ab000"/><path d="M614.3,571.1L615,574.4L600.9,575L600.2,571.4z" fill="#6bd80a"/><path d="M617.1,573.9L617.9,577.1L601.5,578.1L600.8,574.5z" fill="#6fdf11"/><path d="M614.3,576.9L615.2,580.2L602.2,581.1L601.4,577.6z" fill="#41b000"/><path d="M617.6,579.6L618.6,582.9L603,584.2L602.1,580.7z" fill="#68df10"/><path d="M616.2,582.6L617.3,585.9L603.8,587.3L602.8,583.8z" fill="#61db0d"/><path d="M620.4,585.2L621.5,588.4L604.7,590.4L603.7,586.8z" fill="#64e112"/><path d="M620.6,588.1L621.7,591.4L605.6,593.5L604.5,589.9z" fill="#63e314"/><path d="M620.1,591.1L621.3,594.4L606.7,596.5L605.5,593z" fill="#33af00"/><path d="M618.7,594.3L620,597.6L607.8,599.6L606.5,596.1z" fill="#54dc0f"/><path d="M623.2,596.7L624.6,599.9L608.9,602.7L607.6,599.1z" fill="#59e314"/><path d="M625.6,599.3L627.1,602.4L610.2,605.7L608.8,602.2z" fill="#5be718"/><path d="M623.9,602.6L625.4,605.8L611.5,608.8L610,605.3z" fill="#4fe012"/><path d="M624.4,605.6L626,608.8L612.8,611.8L611.3,608.3z" fill="#46dc0e"/><path d="M629.4,607.6L631,610.8L614.2,614.8L612.6,611.3z" fill="#4ae113"/><path d="M629.5,610.6L631.2,613.8L615.7,617.8L614,614.4z" fill="#1eaf00"/><path d="M631,613.4L632.8,616.5L617.3,620.8L615.5,617.4z" fill="#4be718"/><path d="M633,616L634.8,619.1L618.9,623.8L617,620.4z" fill="#18af00"/><path d="M634.8,618.7L636.7,621.8L620.6,626.8L618.6,623.4z" fill="#39df11"/><path d="M637.4,621.1L639.3,624.1L622.3,629.7L620.3,626.3z" fill="#34de10"/><path d="M638.9,623.8L640.9,626.8L624.1,632.7L622.1,629.3z" fill="#0faf00"/><path d="M636.5,627.9L638.6,631L626,635.6L623.8,632.2z" fill="#29dc0e"/><path d="M641.8,629.3L643.9,632.3L627.9,638.5L625.7,635.2z" fill="#21d80b"/><path d="M644.5,631.6L646.7,634.6L629.9,641.4L627.6,638.1z" fill="#24dd0f"/><path d="M644.2,635.1L646.5,638.1L631.9,644.2L629.6,641z" fill="#04af00"/><path d="M648.3,636.8L650.6,639.7L634.1,647.1L631.6,643.8z" fill="#1edd0f"/><path d="M650.1,639.4L652.4,642.3L636.2,649.9L633.7,646.7z" fill="#1ddd12"/><path d="M651.6,642.2L654,645.1L638.5,652.7L635.9,649.5z" fill="#18db14"/><path d="M651.1,646L653.6,648.9L640.7,655.5L638.1,652.3z" fill="#16da16"/><path d="M653.1,648.6L655.6,651.5L643.1,658.2L640.4,655.1z" fill="#00b00b"/><path d="M658.4,649.5L661,652.3L645.5,660.9L642.7,657.8z" fill="#18dc1f"/><path d="M659.1,652.8L661.8,655.6L647.9,663.6L645.1,660.5z" fill="#23e329"/><path d="M663,654.3L665.7,657.1L650.4,666.3L647.6,663.2z" fill="#22e22c"/><path d="M663.5,657.8L666.2,660.6L653,668.9L650.1,665.9z" fill="#17dc33"/><path d="M664.3,661.2L667.1,664L655.6,671.6L652.6,668.5z" fill="#10d930"/><path d="M666.7,663.6L669.6,666.4L658.3,674.1L655.2,671.2z" fill="#16dc39"/><path d="M670.9,664.8L673.9,667.5L661,676.7L657.9,673.7z" fill="#16dd3d"/><path d="M673.5,667.2L676.4,669.8L663.8,679.2L660.6,676.3z" fill="#00b322"/><path d="M676.1,669.4L679.1,672L666.6,681.7L663.4,678.8z" fill="#1ae047"/><path d="M679.6,671L682.6,673.5L669.5,684.1L666.2,681.3z" fill="#1de24c"/><path d="M682.2,673.2L685.3,675.7L672.4,686.5L669,683.7z" fill="#26e857"/><path d="M684.2,675.9L687.4,678.4L675.4,688.9L672,686.2z" fill="#24e758"/><path d="M687.3,677.8L690.5,680.2L678.4,691.2L674.9,688.5z" fill="#21e559"/><path d="M689.2,680.7L692.5,683.1L681.4,693.5L677.9,690.9z" fill="#2aeb63"/><path d="M693.6,681.3L696.9,683.6L684.5,695.8L681,693.2z" fill="#2fee6a"/><path d="M695.2,684.5L698.5,686.8L687.7,698L684.1,695.4z" fill="#32f06f"/><path d="M696.5,688.2L700,690.5L690.9,700.2L687.2,697.7z" fill="#23e768"/><path d="M699.3,690.4L702.7,692.7L694.1,702.3L690.4,699.9z" fill="#00b53f"/><path d="M704.4,690.1L707.8,692.2L697.4,704.4L693.6,702z" fill="#23e76f"/><path d="M705.6,694L709.1,696.2L700.7,706.5L696.9,704.1z" fill="#26e975"/><path d="M708.6,696L712.2,698.1L704.1,708.5L700.2,706.2z" fill="#2cec7b"/><path d="M712,697.5L715.6,699.6L707.5,710.5L703.6,708.2z" fill="#30ef81"/><path d="M716,698.2L719.6,700.3L710.9,712.4L706.9,710.2z" fill="#34f186"/><path d="M718.1,701.4L721.8,703.4L714.3,714.3L710.4,712.1z" fill="#2aeb84"/><path d="M721.9,702.4L725.6,704.3L717.8,716.1L713.8,714z" fill="#20e581"/><path d="M726.2,702.4L729.9,704.3L721.4,717.9L717.3,715.8z" fill="#16df7f"/><path d="M728.6,705.3L732.3,707.1L724.9,719.6L720.8,717.6z" fill="#10db7f"/><path d="M732.3,706.1L736.1,707.9L728.5,721.3L724.4,719.4z" fill="#00b55b"/><path d="M736.5,706L740.3,707.7L732.1,723L728,721.1z" fill="#20e58e"/><path d="M737.6,711.5L741.5,713.2L735.8,724.6L731.6,722.7z" fill="#00b561"/><path d="M742.6,709.9L746.4,711.6L739.5,726.1L735.2,724.3z" fill="#00b563"/><path d="M745.1,713L749,714.6L743.2,727.6L738.9,725.9z" fill="#24e798"/><path d="M748.2,715.2L752.1,716.7L746.9,729L742.6,727.4z" fill="#1be297"/><path d="M752.2,715.1L756.2,716.6L750.6,730.4L746.3,728.8z" fill="#00b56b"/><path d="M754.7,718.8L758.7,720.3L754.4,731.8L750.1,730.2z" fill="#24e8a1"/><path d="M758.2,720L762.2,721.4L758.2,733.1L753.8,731.6z" fill="#2beca7"/><path d="M762.9,717.7L766.9,719.1L762,734.3L757.6,732.9z" fill="#1ee4a4"/><path d="M765.2,722.4L769.3,723.7L765.8,735.5L761.4,734.1z" fill="#26e9aa"/><path d="M769.2,722.3L773.3,723.5L769.7,736.6L765.3,735.3z" fill="#25e8ab"/><path d="M772.6,723.7L776.7,724.9L773.5,737.7L769.1,736.5z" fill="#1be2aa"/><path d="M776.2,724.9L780.3,726L777.4,738.7L773,737.5z" fill="#00b57a"/><path d="M779.5,726.8L783.7,727.9L781.3,739.7L776.8,738.6z" fill="#13ddad"/><path d="M783.4,726.5L787.5,727.5L785.2,740.6L780.7,739.5z" fill="#1de4b2"/><path d="M787.2,726.4L791.3,727.4L789.1,741.5L784.6,740.5z" fill="#18e0b1"/><path d="M790.4,729.6L794.6,730.6L793,742.3L788.5,741.3z" fill="#00b480"/><path d="M794.5,726.9L798.6,727.8L797,743L792.4,742.1z" fill="#00b481"/><path d="M797.9,729L802.1,729.8L800.9,743.7L796.4,742.9z" fill="#00b481"/><path d="M801.7,728L805.8,728.7L804.8,744.3L800.3,743.6z" fill="#22e5b8"/><path d="M805.3,728.5L809.4,729.2L808.8,744.9L804.2,744.2z" fill="#1fe3b8"/><path d="M808.8,729.9L813,730.5L812.7,745.4L808.2,744.8z" fill="#29e9bc"/><path d="M812.5,729.7L816.6,730.3L816.6,745.9L812.1,745.4z" fill="#29e9bd"/><path d="M816.1,732.3L820.3,732.8L820.6,746.3L816.1,745.8z" fill="#00b385"/><path d="M819.7,734.1L824,734.6L824.5,746.6L820,746.2z" fill="#18dfb9"/><path d="M823.4,733.9L827.6,734.3L828.5,746.9L823.9,746.6z" fill="#00b386"/><path d="M826.9,731.4L831,731.8L832.4,747.2L827.9,746.9z" fill="#20e3bd"/><path d="M830.7,734.4L834.9,734.7L836.3,747.3L831.8,747.1z" fill="#1be0bc"/><path d="M834.3,733.8L838.5,734L840.2,747.5L835.7,747.3z" fill="#16dcbb"/><path d="M838,735L842.3,735.1L844.2,747.5L839.7,747.5z" fill="#23e4c0"/><path d="M841.5,733.8L845.7,733.9L848.1,747.5L843.6,747.5z" fill="#1ce0bf"/><path d="M845.3,735L849.5,735L851.9,747.5L847.5,747.5z" fill="#00b289"/><path d="M848.9,734.7L853.1,734.7L855.8,747.4L851.4,747.5z" fill="#1ce0c0"/><path d="M852.7,735.5L856.9,735.4L859.7,747.2L855.2,747.4z" fill="#00b28a"/><path d="M856.3,735.2L860.4,735L863.5,747L859.1,747.2z" fill="#16dcbf"/><path d="M860.1,736.1L864.3,735.9L867.4,746.7L863,747z" fill="#10d8be"/><path d="M863.5,735L867.7,734.8L871.2,746.4L866.8,746.7z" fill="#18ddc0"/><path d="M866.4,732.5L870.5,732.2L875,746L870.6,746.4z" fill="#1ee1c2"/><path d="M869.8,731.7L873.8,731.4L878.8,745.5L874.4,746z" fill="#1cdfc2"/><path d="M873.2,731L877.2,730.6L882.5,745L878.2,745.6z" fill="#16dcc1"/><path d="M877.2,732.1L881.2,731.7L886.2,744.4L881.9,745.1z" fill="#11d8c0"/><path d="M880.3,730.7L884.3,730.2L889.9,743.8L885.7,744.5z" fill="#19ddc2"/><path d="M883.9,730.6L887.9,730L893.6,743.1L889.4,743.9z" fill="#14dac1"/><path d="M887.9,731.3L891.9,730.7L897.3,742.4L893.1,743.2z" fill="#20e1c5"/><path d="M890.8,729.5L894.7,728.8L900.9,741.6L896.7,742.5z" fill="#21e2c5"/><path d="M894.5,729.5L898.4,728.7L904.5,740.8L900.4,741.7z" fill="#25e4c6"/><path d="M899.2,731.4L903.2,730.6L908.1,739.9L904,740.9z" fill="#1bdec4"/><path d="M902.5,730.4L906.4,729.5L911.6,738.9L907.5,740z" fill="#24e3c6"/><path d="M904.8,727.6L908.7,726.7L915.1,737.9L911.1,739.1z" fill="#25e4c7"/><path d="M908.4,727.3L912.3,726.3L918.6,736.9L914.6,738.1z" fill="#18dcc4"/><path d="M911.2,725.5L915,724.5L922,735.7L918.1,737z" fill="#1bdec4"/><path d="M914.7,724.9L918.5,723.9L925.4,734.6L921.5,735.9z" fill="#14dac3"/><path d="M918.9,725.5L922.7,724.3L928.8,733.4L924.9,734.8z" fill="#10d7c1"/><path d="M921.1,722.8L924.8,721.6L932.1,732.1L928.3,733.5z" fill="#10d8c1"/><path d="M923.7,720.9L927.4,719.7L935.4,730.8L931.6,732.3z" fill="#16dbc3"/><path d="M928.1,721.5L931.7,720.2L938.6,729.4L934.9,731z" fill="#1ee0c5"/><path d="M930.9,719.9L934.5,718.5L941.8,728L938.1,729.6z" fill="#00b18e"/><path d="M935.2,720.2L938.8,718.8L945,726.5L941.4,728.2z" fill="#1cdec4"/><path d="M937.9,718.5L941.5,717L948.1,725L944.5,726.7z" fill="#00b18d"/><path d="M941.6,717.9L945.1,716.3L951.2,723.4L947.6,725.2z" fill="#1adec3"/><path d="M943.1,714.7L946.5,713.1L954.2,721.8L950.7,723.7z" fill="#20e1c4"/><path d="M946.5,713.8L949.9,712.2L957.2,720.1L953.8,722z" fill="#1fe1c4"/><path d="M950.5,713.5L953.8,711.8L960.1,718.4L956.8,720.4z" fill="#00b18d"/><path d="M951.2,709.7L954.6,708L963,716.7L959.7,718.7z" fill="#00b18c"/><path d="M955.4,709.6L958.7,707.8L965.9,714.9L962.6,716.9z" fill="#2eeac7"/><path d="M958.3,708L961.6,706.2L968.7,713L965.4,715.1z" fill="#00b28c"/><path d="M959.9,705.2L963.1,703.3L971.4,711.1L968.2,713.3z" fill="#1cdfc1"/><path d="M964.7,705.5L967.8,703.5L974.1,709.2L971,711.4z" fill="#1ee1c1"/><path d="M967.4,703.8L970.5,701.8L976.7,707.2L973.7,709.5z" fill="#25e5c3"/><path d="M968.2,700.4L971.3,698.4L979.3,705.2L976.3,707.5z" fill="#27e6c3"/><path d="M970.9,698.6L973.9,696.6L981.8,703.1L978.9,705.5z" fill="#00b28a"/><path d="M975.7,698.6L978.6,696.5L984.3,701L981.4,703.4z" fill="#22e3c1"/><path d="M977.5,696.2L980.4,694L986.7,698.9L983.9,701.4z" fill="#1adfbe"/><path d="M980,694.2L982.8,692L989.1,696.7L986.4,699.2z" fill="#00b288"/><path d="M981.4,691.5L984.2,689.2L991.4,694.5L988.7,697z" fill="#00b288"/><path d="M983.5,689.2L986.2,687L993.6,692.2L991,694.8z" fill="#29e8c0"/><path d="M987.3,688.3L990,685.9L995.8,689.9L993.3,692.6z" fill="#23e5be"/><path d="M988.1,685.1L990.7,682.8L998,687.6L995.5,690.3z" fill="#23e5bd"/><path d="M991.6,683.9L994.2,681.5L1000,685.3L997.7,688z" fill="#00b385"/><path d="M994.5,682.2L997,679.7L1002.1,682.9L999.7,685.6z" fill="#25e6bc"/><path d="M995,678.9L997.5,676.5L1004,680.4L1001.8,683.2z" fill="#1ee2b9"/><path d="M998,677.3L1000.4,674.7L1005.9,678L1003.7,680.8z" fill="#18dfb7"/><path d="M999.3,674.6L1001.7,672L1007.7,675.5L1005.6,678.3z" fill="#23e6b9"/><path d="M1002,672.7L1004.3,670L1009.5,672.9L1007.5,675.8z" fill="#2aeabb"/><path d="M1004.1,670.5L1006.4,667.8L1011.2,670.4L1009.3,673.3z" fill="#00b481"/><path d="M1005.8,668L1008,665.3L1012.9,667.8L1011,670.8z" fill="#25e8b8"/><path d="M1007.8,665.7L1010,662.9L1014.5,665.2L1012.6,668.2z" fill="#00b480"/><path d="M1009.3,663.1L1011.4,660.3L1016,662.5L1014.2,665.6z" fill="#17e0b1"/><path d="M1011.9,661.1L1013.9,658.2L1017.4,659.9L1015.8,662.9z" fill="#16dfb0"/><path d="M1012.9,658.2L1014.9,655.4L1018.8,657.2L1017.2,660.3z" fill="#15dfad"/><path d="M1015.4,656.1L1017.3,653.2L1020.2,654.5L1018.6,657.6z" fill="#1ae2ad"/><path d="M1017.2,653.7L1019,650.7L1021.4,651.7L1020,654.9z" fill="#00b578"/><path d="M1018.1,650.8L1020,647.9L1022.6,649L1021.2,652.1z" fill="#19e1a7"/><path d="M1019.8,648.3L1021.6,645.4L1023.8,646.2L1022.5,649.4z" fill="#26e9a9"/><path d="M1021.9,645.9L1023.6,642.9L1024.8,643.4L1023.6,646.6z" fill="#00b572"/><path d="M1023.3,643.3L1025.1,640.3L1025.8,640.5L1024.7,643.8z" fill="#16df9d"/><path d="M1024.9,640.7L1026.8,637.7L1026.8,637.7L1025.7,641z" fill="#1be29d"/></g>
<path d="M638.3,449.8L634,454.2L629.9,458.8L626,463.5L622.4,468.3L618.9,473.2L615.7,478.3L612.8,483.5L610,488.8L607.5,494.2L605.3,499.8L603.3,505.4L601.5,511.1L600,516.9L598.8,522.7L597.9,528.7L597.1,534.6L596.7,540.7L596.5,546.8L596.6,552.9L597,559.1L597.6,565.3L598.6,571.5L599.7,577.7L601.2,583.9L602.9,590.1L604.9,596.3L607.1,602.5L609.7,608.6L612.4,614.7L615.5,620.8L618.8,626.8L622.3,632.8L626.1,638.6L630.2,644.4L634.5,650.1L639,655.8L643.8,661.3L648.7,666.7L653.9,672L659.4,677.2L665,682.2L670.8,687.1L676.8,691.9L683,696.5L689.4,700.9L696,705.2L702.7,709.3L709.5,713.3L716.5,717L723.7,720.6L730.9,724L738.3,727.2L745.8,730.1L753.3,732.9L761,735.5L768.7,737.8L776.5,739.9L784.4,741.9L792.3,743.5L800.2,745L808.1,746.2L816.1,747.3L824,748L831.9,748.6L839.8,748.9L847.7,749L855.6,748.8L863.3,748.5L871,747.8L878.7,747L886.2,745.9L893.7,744.6L901,743.1L908.3,741.4L915.4,739.4L922.3,737.3L929.2,734.9L935.8,732.3L942.3,729.5L948.7,726.5L954.8,723.3L960.8,719.9L966.6,716.3L972.2,712.6L977.6,708.6L982.7,704.5L987.7,700.3L992.4,695.8L996.9,691.3L1001.2,686.5L1005.2,681.7L1009,676.7L1012.5,671.6" fill="none" stroke="#003010" stroke-opacity="0.22" stroke-width="3"/>
<path d="M639.6,450.7L635.4,455.1L631.3,459.6L627.5,464.2L623.8,469L620.4,473.9L617.2,479L614.3,484.1L611.6,489.4L609.1,494.8L606.9,500.3L604.9,505.8L603.2,511.5L601.7,517.2L600.5,523.1L599.5,528.9L598.8,534.9L598.4,540.9L598.2,546.9L598.3,553L598.7,559.1L599.3,565.3L600.2,571.4L601.4,577.6L602.8,583.8L604.5,589.9L606.5,596.1L608.8,602.2L611.3,608.3L614,614.4L617,620.4L620.3,626.3L623.8,632.2L627.6,638.1L631.6,643.8L635.9,649.5L640.4,655.1L645.1,660.5L650.1,665.9L655.2,671.2L660.6,676.3L666.2,681.3L672,686.2L677.9,690.9L684.1,695.4L690.4,699.9L696.9,704.1L703.6,708.2L710.4,712.1L717.3,715.8L724.4,719.4L731.6,722.7L738.9,725.9L746.3,728.8L753.8,731.6L761.4,734.1L769.1,736.5L776.8,738.6L784.6,740.5L792.4,742.1L800.3,743.6L808.2,744.8L816.1,745.8L823.9,746.6L831.8,747.1L839.7,747.5L847.5,747.5L855.2,747.4L863,747L870.6,746.4L878.2,745.6L885.7,744.5L893.1,743.2L900.4,741.7L907.5,740L914.6,738.1L921.5,735.9L928.3,733.5L934.9,731L941.4,728.2L947.6,725.2L953.8,722L959.7,718.7L965.4,715.1L971,711.4L976.3,707.5L981.4,703.4L986.4,699.2L991,694.8L995.5,690.3L999.7,685.6L1003.7,680.8L1007.5,675.8L1011,670.8" fill="none" stroke="#003a10" stroke-opacity="0.45" stroke-width="1"/>
<path d="M639.2,457.4L635.7,462.1L632.5,467L629.5,471.9L626.7,476.9L624.1,482L621.7,487.1L619.5,492.4L617.6,497.7L615.9,503.1L614.4,508.6L613.2,514.1L612.2,519.6L611.5,525.2L611,530.9L610.7,536.6L610.6,542.3L610.8,548L611.3,553.8L612,559.5L612.9,565.3L614.1,571.1L615.5,576.8L617.1,582.6L619,588.3L621.1,594L623.4,599.6L625.9,605.3L628.7,610.8L631.7,616.4L635,621.8L638.4,627.2L642.1,632.5L645.9,637.8L650,643L654.3,648L658.7,653L663.4,657.9L668.2,662.7L673.2,667.3L678.4,671.9L683.8,676.3L689.3,680.6L695,684.7L700.8,688.8L706.8,692.6L712.9,696.4L719.2,700L725.5,703.4L732,706.6L738.6,709.7L745.3,712.6L752.1,715.4L759,718L765.9,720.4L772.9,722.6L780,724.6L787.2,726.4L794.3,728.1L801.6,729.5L808.8,730.8L816.1,731.8L823.3,732.7L830.6,733.4L837.9,733.8L845.2,734.1L852.4,734.1L859.6,734L866.8,733.6L873.9,733.1L880.9,732.3L887.9,731.4L894.8,730.2L901.7,728.8L908.4,727.3L915.1,725.5L921.6,723.6L928,721.4L934.3,719.1L940.5,716.6L946.6,713.9L952.4,711L958.2,707.9L963.8,704.6L969.2,701.2L974.5,697.6L979.5,693.9L984.5,690L989.2,685.9L993.7,681.7L998,677.3L1002.2,672.8L1006.1,668.2" fill="none" stroke="#e8ffe0" stroke-opacity="0.18" stroke-width="1"/>
<path d="M1001.9,687L1005.9,682.1L1009.7,677.1L1013.2,672L1016.5,666.7L1019.6,661.4L1022.3,655.9L1024.8,650.4L1027.1,644.7L1029.1,639L1030.8,633.2L1032.2,627.3L1033.4,621.4L1034.3,615.4L1035,609.3L1035.4,603.3L1035.5,597.2L1035.3,591.1L1034.9,584.9L1034.2,578.8L1033.3,572.7L1032,566.5L1030.6,560.4L1028.9,554.3L1026.9,548.3L1024.7,542.2L1022.2,536.3L1019.5,530.3L1016.6,524.5L1013.4,518.7L1010,512.9L1006.4,507.3L1002.5,501.7L998.4,496.2L994.2,490.8L989.7,485.5L985,480.3L980.2,475.2L975.2,470.3L969.9,465.4L964.5,460.7L959,456.1L953.3,451.7L947.4,447.4L941.4,443.2L935.2,439.2L928.9,435.4L922.5,431.7L916,428.2L909.3,424.8L902.6,421.6L895.8,418.6L888.8,415.7L881.8,413.1L874.7,410.6L867.6,408.3L860.4,406.2L853.1,404.2L845.8,402.5L838.5,401L831.2,399.6L823.8,398.4L816.4,397.5L809,396.7L801.7,396.1L794.3,395.8L787,395.6L779.6,395.6L772.4,395.9L765.1,396.3L758,396.9L750.9,397.8L743.8,398.8L736.9,400L730,401.4L723.2,403.1L716.5,404.9L710,406.9L703.5,409.1L697.2,411.5L691,414L684.9,416.8L679,419.7L673.2,422.8L667.6,426.1L662.2,429.6L656.9,433.2L651.8,437L646.9,441L642.2,445.1" fill="none" stroke="#f0ffc0" stroke-opacity="0.25" stroke-width="1"/>
<path d="M999.7,685.6L1003.7,680.8L1007.5,675.8L1011,670.8L1014.2,665.6L1017.2,660.3L1020,654.9L1022.5,649.4L1024.7,643.8L1026.6,638.1L1028.3,632.4L1029.8,626.6L1031,620.7L1031.9,614.8L1032.5,608.8L1032.9,602.8L1033,596.8L1032.8,590.8L1032.4,584.7L1031.7,578.6L1030.8,572.6L1029.6,566.5L1028.2,560.5L1026.5,554.5L1024.5,548.5L1022.3,542.5L1019.9,536.6L1017.2,530.7L1014.3,524.9L1011.2,519.2L1007.8,513.5L1004.2,507.9L1000.4,502.4L996.4,497L992.2,491.6L987.8,486.4L983.2,481.3L978.4,476.2L973.4,471.3L968.2,466.5L962.9,461.9L957.4,457.3L951.7,453L945.9,448.7L940,444.6L933.9,440.6L927.7,436.8L921.3,433.2L914.9,429.7L908.3,426.4L901.6,423.2L894.9,420.2L888,417.4L881.1,414.7L874.1,412.3L867,410L859.9,407.9L852.7,406L845.5,404.3L838.3,402.8L831,401.4L823.7,400.3L816.4,399.3L809.1,398.6L801.8,398L794.5,397.6L787.3,397.5L780,397.5L772.9,397.7L765.7,398.2L758.6,398.8L751.6,399.6L744.6,400.6L737.7,401.8L730.9,403.2L724.2,404.8L717.6,406.6L711.1,408.6L704.7,410.8L698.5,413.2L692.3,415.7L686.3,418.4L680.5,421.3L674.8,424.4L669.2,427.7L663.9,431.1L658.6,434.7L653.6,438.5L648.8,442.4L644.1,446.5" fill="none" stroke="#142000" stroke-opacity="0.62" stroke-width="1.05"/>
<filter id="bl" x="-5%" y="-5%" width="110%" height="110%"><feGaussianBlur stdDeviation="0.9"/></filter><g clip-path="url(#sq)"><g filter="url(#bl)" fill="none" stroke-width="2.2"><path d="M240,167.3L269,161.9L298,156.5L327,151.3L356,146.1L385,140.8L414,135.6L443,130.2L472,124.7L501,119.1L530,113.3L559,107.3L588,101.2L617,95L646,88.7L675,82.3L704,75.9L733,69.5L762,63.3L791,57.1L820,51.1L849,45.2L878,39.6L907,34L936,28.6L965,23.3L994,18.1L1023,12.8L1052,7.6L1081,2.3L1110,-3.1L1139,-8.6L1168,-14.3L1197,-20.2L1226,-26.2L1255,-32.3L1284,-38.6L1313,-44.9L1342,-51.3L1371,-57.7L1400,-64" stroke="#fff" stroke-opacity="0.032"/><path d="M240,178.5L269,172.6L298,166.4L327,160.1L356,153.7L385,147.2L414,140.7L443,134.4L472,128.2L501,122.2L530,116.5L559,111L588,105.7L617,100.6L646,95.5L675,90.3L704,85.1L733,79.7L762,74.1L791,68.2L820,62.1L849,55.9L878,49.4L907,42.9L936,36.5L965,30.1L994,23.9L1023,17.9L1052,12.1L1081,6.5L1110,1.2L1139,-4L1168,-9.1L1197,-14.2L1226,-19.4L1255,-24.8L1284,-30.3L1313,-36.1L1342,-42.2L1371,-48.4L1400,-54.8" stroke="#000" stroke-opacity="0.028"/><path d="M240,183.5L269,176.9L298,170.3L327,163.8L356,157.5L385,151.5L414,145.7L443,140.3L472,135L501,130L530,125L559,120.1L588,115L617,109.8L646,104.4L675,98.7L704,92.7L733,86.5L762,80.1L791,73.5L820,66.8L849,60.2L878,53.7L907,47.4L936,41.3L965,35.5L994,30L1023,24.7L1052,19.6L1081,14.6L1110,9.7L1139,4.7L1168,-0.5L1197,-5.9L1226,-11.5L1255,-17.4L1284,-23.6L1313,-30L1342,-36.6L1371,-43.2L1400,-49.8" stroke="#fff" stroke-opacity="0.044"/><path d="M240,191.4L269,186.1L298,181.3L327,176.8L356,172.1L385,166.9L414,161L443,154.4L472,147.5L501,140.4L530,133.7L559,127.6L588,122.3L617,117.4L646,112.9L675,108.2L704,103L733,97.2L762,90.7L791,83.7L820,76.7L849,70L878,63.8L907,58.4L936,53.6L965,49L994,44.4L1023,39.2L1052,33.4L1081,26.9L1110,20L1139,13L1168,6.2L1197,0L1226,-5.4L1255,-10.3L1284,-14.8L1313,-19.5L1342,-24.6L1371,-30.4L1400,-36.8" stroke="#000" stroke-opacity="0.041"/><path d="M240,202.1L269,195.4L298,188.6L327,182.2L356,176.4L385,171.3L414,166.5L443,161.5L472,156.1L501,150L530,143.3L559,136.5L588,130L617,124.2L646,119L675,114.1L704,109.3L733,103.9L762,97.8L791,91.2L820,84.4L849,77.9L878,71.9L907,66.7L936,61.8L965,57L994,51.7L1023,45.7L1052,39.1L1081,32.3L1110,25.8L1139,19.7L1168,14.4L1197,9.5L1226,4.7L1255,-0.6L1284,-6.4L1313,-12.9L1342,-19.7L1371,-26.4L1400,-32.5" stroke="#fff" stroke-opacity="0.031"/><path d="M240,212.6L269,207.1L298,201.2L327,195L356,188.6L385,181.9L414,175.3L443,168.7L472,162.3L501,156.2L530,150.4L559,145L588,139.8L617,134.8L646,129.9L675,124.9L704,119.7L733,114.3L762,108.5L791,102.4L820,95.9L849,89.3L878,82.7L907,76L936,69.6L965,63.4L994,57.6L1023,52.1L1052,46.8L1081,41.8L1110,36.9L1139,31.9L1168,26.8L1197,21.4L1226,15.7L1255,9.7L1284,3.3L1313,-3.2L1342,-9.9L1371,-16.6L1400,-23.1" stroke="#000" stroke-opacity="0.039"/><path d="M240,225.3L269,220.1L298,214.8L327,209.2L356,203.4L385,197.3L414,190.9L443,184.4L472,177.8L501,171.2L530,164.5L559,157.9L588,151.6L617,145.4L646,139.4L675,133.7L704,128.3L733,123.1L762,118L791,113.1L820,108.1L849,103.2L878,98.1L907,92.8L936,87.3L965,81.6L994,75.6L1023,69.4L1052,63L1081,56.4L1110,49.7L1139,43L1168,36.4L1197,30L1226,23.7L1255,17.7L1284,11.9L1313,6.3L1342,1L1371,-4.1L1400,-9.1" stroke="#000" stroke-opacity="0.034"/><path d="M240,230.6L269,225L298,219.4L327,213.9L356,208.5L385,203L414,197.5L443,192L472,186.3L501,180.6L530,174.7L559,168.8L588,162.7L617,156.6L646,150.5L675,144.3L704,138.2L733,132.1L762,126.2L791,120.3L820,114.5L849,108.9L878,103.3L907,97.8L936,92.4L965,86.9L994,81.5L1023,75.9L1052,70.3L1081,64.6L1110,58.8L1139,52.8L1168,46.8L1197,40.7L1226,34.6L1255,28.4L1284,22.3L1313,16.2L1342,10.2L1371,4.3L1400,-1.5" stroke="#000" stroke-opacity="0.050"/><path d="M240,246.7L269,241.2L298,234.4L327,226.8L356,219.2L385,212.7L414,207.4L443,203.3L472,199.3L501,194.7L530,188.8L559,181.7L588,174L617,166.7L646,160.5L675,155.7L704,151.7L733,147.6L762,142.6L791,136.3L820,128.9L849,121.2L878,114.2L907,108.5L936,104L965,100.1L994,95.8L1023,90.4L1052,83.6L1081,76L1110,68.5L1139,61.9L1168,56.6L1197,52.4L1226,48.5L1255,43.9L1284,38L1313,30.9L1342,23.2L1371,15.9L1400,9.7" stroke="#000" stroke-opacity="0.052"/><path d="M240,257.5L269,250.6L298,244L327,238.1L356,232.8L385,228.1L414,223.4L443,218.3L472,212.5L501,206.1L530,199.2L559,192.3L588,185.9L617,180.1L646,175L675,170.3L704,165.6L733,160.4L762,154.4L791,147.9L820,141L849,134.1L878,127.8L907,122.2L936,117.3L965,112.6L994,107.8L1023,102.4L1052,96.3L1081,89.6L1110,82.7L1139,76L1168,69.8L1197,64.4L1226,59.5L1255,54.8L1284,49.9L1313,44.4L1342,38.2L1371,31.4L1400,24.5" stroke="#000" stroke-opacity="0.048"/><path d="M240,264.9L269,259.4L298,253.8L327,248.1L356,242.2L385,236.3L414,230.2L443,224.1L472,217.9L501,211.6L530,205.4L559,199.2L588,193L617,187L646,181L675,175.2L704,169.4L733,163.8L762,158.3L791,152.9L820,147.5L849,142.2L878,136.8L907,131.4L936,125.9L965,120.4L994,114.7L1023,108.9L1052,102.9L1081,96.9L1110,90.8L1139,84.6L1168,78.4L1197,72.1L1226,65.9L1255,59.7L1284,53.6L1313,47.6L1342,41.8L1371,36L1400,30.4" stroke="#000" stroke-opacity="0.029"/><path d="M240,270L269,263.9L298,257.9L327,252L356,246.2L385,240.5L414,234.9L443,229.4L472,223.9L501,218.4L530,212.9L559,207.4L588,201.9L617,196.2L646,190.4L675,184.6L704,178.6L733,172.6L762,166.5L791,160.4L820,154.3L849,148.1L878,142.1L907,136.1L936,130.2L965,124.4L994,118.7L1023,113.1L1052,107.6L1081,102.1L1110,96.7L1139,91.2L1168,85.7L1197,80.1L1226,74.4L1255,68.6L1284,62.8L1313,56.8L1342,50.7L1371,44.6L1400,38.5" stroke="#000" stroke-opacity="0.042"/><path d="M240,279L269,271.8L298,264.7L327,258.1L356,252.3L385,247.3L414,242.8L443,238.4L472,233.6L501,228.1L530,221.8L559,214.8L588,207.6L617,200.6L646,194.2L675,188.7L704,183.9L733,179.5L762,175L791,170L820,164.2L849,157.6L878,150.5L907,143.3L936,136.5L965,130.4L994,125.2L1023,120.6L1052,116.2L1081,111.6L1110,106.3L1139,100.2L1168,93.4L1197,86.2L1226,79.1L1255,72.5L1284,66.7L1313,61.7L1342,57.3L1371,52.9L1400,48.1" stroke="#000" stroke-opacity="0.028"/><path d="M240,286.6L269,281L298,275.3L327,269.5L356,263.5L385,257.5L414,251.4L443,245.2L472,239L501,232.8L530,226.6L559,220.5L588,214.4L617,208.5L646,202.6L675,196.9L704,191.3L733,185.7L762,180.3L791,174.9L820,169.5L849,164.1L878,158.6L907,153.1L936,147.6L965,141.9L994,136.1L1023,130.2L1052,124.2L1081,118.1L1110,111.9L1139,105.7L1168,99.5L1197,93.3L1226,87.2L1255,81.1L1284,75.1L1313,69.2L1342,63.4L1371,57.8L1400,52.2" stroke="#fff" stroke-opacity="0.027"/><path d="M240,293.1L269,287.8L298,282.4L327,277L356,271.4L385,265.6L414,259.7L443,253.7L472,247.5L501,241.3L530,235L559,228.7L588,222.4L617,216.2L646,210.1L675,204.1L704,198.2L733,192.6L762,187L791,181.6L820,176.3L849,171L878,165.7L907,160.4L936,155L965,149.4L994,143.8L1023,138L1052,132.1L1081,126L1110,119.8L1139,113.5L1168,107.2L1197,100.9L1226,94.6L1255,88.4L1284,82.4L1313,76.4L1342,70.7L1371,65.1L1400,59.6" stroke="#fff" stroke-opacity="0.022"/><path d="M240,298.8L269,293L298,287.4L327,281.9L356,276.5L385,271.1L414,265.8L443,260.4L472,255L501,249.5L530,243.8L559,238L588,232.1L617,226L646,219.8L675,213.6L704,207.3L733,201.1L762,194.9L791,188.8L820,182.8L849,177L878,171.3L907,165.8L936,160.3L965,155L994,149.6L1023,144.3L1052,138.9L1081,133.4L1110,127.8L1139,122L1168,116.2L1197,110.1L1226,104L1255,97.8L1284,91.5L1313,85.3L1342,79L1371,72.9L1400,66.9" stroke="#000" stroke-opacity="0.034"/><path d="M240,309.1L269,302.9L298,296.2L327,289.4L356,282.5L385,276L414,270L443,264.5L472,259.5L501,254.7L530,250L559,245L588,239.5L617,233.5L646,227L675,220.2L704,213.3L733,206.6L762,200.4L791,194.7L820,189.6L849,184.8L878,180L907,175.2L936,169.9L965,164L994,157.7L1023,150.9L1052,144L1081,137.3L1110,130.9L1139,125L1168,119.7L1197,114.8L1226,110.1L1255,105.3L1284,100.1L1313,94.5L1342,88.3L1371,81.7L1400,74.8" stroke="#000" stroke-opacity="0.036"/><path d="M240,321.3L269,315L298,308.6L327,302.1L356,295.6L385,289.2L414,283L443,277.1L472,271.4L501,266L530,260.7L559,255.6L588,250.5L617,245.3L646,240L675,234.6L704,228.8L733,222.8L762,216.6L791,210.2L820,203.8L849,197.3L878,190.8L907,184.6L936,178.5L965,172.7L994,167.2L1023,161.9L1052,156.7L1081,151.6L1110,146.5L1139,141.3L1168,135.9L1197,130.2L1226,124.3L1255,118.2L1284,111.9L1313,105.4L1342,98.9L1371,92.5L1400,86.1" stroke="#000" stroke-opacity="0.030"/><path d="M240,329.9L269,325.2L298,320.7L327,316.1L356,311.2L385,305.7L414,299.5L443,292.7L472,285.7L501,278.6L530,271.8L559,265.6L588,260L617,255.1L646,250.5L675,246L704,241.3L733,236L762,230.1L791,223.6L820,216.7L849,209.6L878,202.6L907,196.1L936,190.2L965,185L994,180.3L1023,175.8L1052,171.2L1081,166.2L1110,160.7L1139,154.4L1168,147.6L1197,140.5L1226,133.5L1255,126.8L1284,120.6L1313,115.1L1342,110.2L1371,105.6L1400,101.1" stroke="#fff" stroke-opacity="0.038"/><path d="M240,339L269,334L298,329L327,323.9L356,318.7L385,313.2L414,307.5L443,301.6L472,295.4L501,289.1L530,282.6L559,276L588,269.4L617,262.8L646,256.3L675,250L704,243.8L733,237.9L762,232.2L791,226.8L820,221.5L849,216.4L878,211.4L907,206.4L936,201.4L965,196.3L994,191L1023,185.6L1052,179.9L1081,174L1110,167.9L1139,161.5L1168,155L1197,148.4L1226,141.8L1255,135.2L1284,128.7L1313,122.4L1342,116.2L1371,110.3L1400,104.6" stroke="#000" stroke-opacity="0.038"/><path d="M240,347.7L269,340.6L298,333.3L327,326.2L356,319.7L385,313.8L414,308.7L443,304.1L472,299.8L501,295.3L530,290.4L559,284.8L588,278.4L617,271.4L646,264.1L675,257L704,250.2L733,244.2L762,238.8L791,234.1L820,229.8L849,225.4L878,220.6L907,215.2L936,209L965,202.2L994,195L1023,187.7L1052,180.8L1081,174.6L1110,169L1139,164.2L1168,159.8L1197,155.4L1226,150.8L1255,145.6L1284,139.6L1313,132.9L1342,125.8L1371,118.5L1400,111.5" stroke="#fff" stroke-opacity="0.026"/><path d="M240,356.3L269,349.7L298,343.1L327,336.9L356,331.2L385,325.9L414,320.9L443,315.9L472,310.8L501,305.2L530,299.2L559,292.8L588,286.1L617,279.5L646,273.2L675,267.3L704,261.8L733,256.8L762,251.8L791,246.8L820,241.4L849,235.5L878,229.2L907,222.6L936,216L965,209.5L994,203.5L1023,197.9L1052,192.7L1081,187.8L1110,182.8L1139,177.5L1168,171.8L1197,165.6L1226,159.1L1255,152.4L1284,145.9L1313,139.7L1342,134L1371,128.7L1400,123.7" stroke="#000" stroke-opacity="0.027"/><path d="M240,363.1L269,357.4L298,352L327,346.9L356,341.9L385,337.1L414,332.2L443,327.1L472,321.8L501,316.3L530,310.4L559,304.1L588,297.6L617,291L646,284.2L675,277.5L704,271L733,264.7L762,258.7L791,253L820,247.6L849,242.5L878,237.6L907,232.7L936,227.8L965,222.7L994,217.5L1023,211.9L1052,206L1081,199.7L1110,193.2L1139,186.6L1168,179.8L1197,173.1L1226,166.6L1255,160.3L1284,154.3L1313,148.6L1342,143.2L1371,138.1L1400,133.2" stroke="#000" stroke-opacity="0.053"/><path d="M240,371L269,364.8L298,358.8L327,353L356,347.5L385,342.1L414,336.9L443,331.8L472,326.5L501,321.1L530,315.4L559,309.5L588,303.4L617,297L646,290.6L675,284.2L704,277.9L733,271.8L762,265.9L791,260.3L820,254.9L849,249.7L878,244.5L907,239.3L936,233.9L965,228.4L994,222.6L1023,216.5L1052,210.3L1081,203.9L1110,197.5L1139,191.1L1168,184.9L1197,178.9L1226,173.2L1255,167.7L1284,162.4L1313,157.2L1342,152L1371,146.8L1400,141.3" stroke="#000" stroke-opacity="0.030"/><path d="M240,382.1L269,375.7L298,369.4L327,363.3L356,357.4L385,351.8L414,346.3L443,341L472,335.8L501,330.5L530,325L559,319.3L588,313.4L617,307.3L646,301L675,294.6L704,288.3L733,282.2L762,276.2L791,270.5L820,265.1L849,259.8L878,254.5L907,249.2L936,243.8L965,238.1L994,232.3L1023,226.1L1052,219.9L1081,213.5L1110,207.2L1139,201L1168,195L1197,189.3L1226,183.8L1255,178.5L1284,173.2L1313,167.9L1342,162.5L1371,156.9L1400,151.1" stroke="#fff" stroke-opacity="0.044"/><path d="M240,390.7L269,385.6L298,380.9L327,376.4L356,371.4L385,365.9L414,359.6L443,352.8L472,345.7L501,338.9L530,332.6L559,327L588,322L617,317.4L646,312.8L675,307.7L704,302L733,295.6L762,288.7L791,281.7L820,274.9L849,268.8L878,263.3L907,258.4L936,253.9L965,249.2L994,244L1023,238.2L1052,231.6L1081,224.7L1110,217.7L1139,211L1168,205L1197,199.6L1226,194.9L1255,190.3L1284,185.6L1313,180.3L1342,174.3L1371,167.6L1400,160.6" stroke="#fff" stroke-opacity="0.020"/><path d="M240,402.6L269,395.3L298,389.2L327,384.4L356,380.5L385,376.5L414,371.7L443,365.5L472,358.2L501,350.4L530,343.1L559,337L588,332.2L617,328.3L646,324.4L675,319.5L704,313.3L733,306L762,298.2L791,290.9L820,284.8L849,280L878,276.1L907,272.2L936,267.3L965,261.1L994,253.8L1023,245.9L1052,238.7L1081,232.6L1110,227.8L1139,223.9L1168,220L1197,215.1L1226,208.9L1255,201.5L1284,193.7L1313,186.4L1342,180.4L1371,175.6L1400,171.7" stroke="#fff" stroke-opacity="0.032"/><path d="M240,413.8L269,406.2L298,398.6L327,391.6L356,385.8L385,381.1L414,377.1L443,373.1L472,368.3L501,362.5L530,355.5L559,347.9L588,340.3L617,333.5L646,327.9L675,323.4L704,319.5L733,315.4L762,310.4L791,304.3L820,297.2L849,289.5L878,282L907,275.5L936,270.1L965,265.7L994,261.8L1023,257.6L1052,252.5L1081,246.1L1110,238.8L1139,231.1L1168,223.8L1197,217.5L1226,212.3L1255,208.1L1284,204.2L1313,199.8L1342,194.4L1371,187.9L1400,180.5" stroke="#fff" stroke-opacity="0.038"/><path d="M240,425.2L269,419.1L298,412.7L327,406.2L356,399.7L385,393.2L414,386.8L443,380.5L472,374.3L501,368.4L530,362.7L559,357.2L588,351.9L617,346.8L646,341.7L675,336.6L704,331.5L733,326.2L762,320.8L791,315.2L820,309.4L849,303.3L878,297.1L907,290.7L936,284.2L965,277.7L994,271.2L1023,264.8L1052,258.5L1081,252.5L1110,246.6L1139,241L1168,235.6L1197,230.3L1226,225.2L1255,220.1L1284,215L1313,209.9L1342,204.6L1371,199.1L1400,193.4" stroke="#fff" stroke-opacity="0.028"/><path d="M240,437.6L269,431L298,424.1L327,417.2L356,410.4L385,403.9L414,397.8L443,392.2L472,387L501,382.2L530,377.5L559,372.8L588,367.9L617,362.6L646,356.8L675,350.6L704,344L733,337.1L762,330.2L791,323.4L820,316.9L849,310.8L878,305.2L907,300L936,295.2L965,290.5L994,285.8L1023,280.9L1052,275.6L1081,269.8L1110,263.6L1139,257L1168,250.1L1197,243.2L1226,236.4L1255,229.9L1284,223.8L1313,218.2L1342,213L1371,208.2L1400,203.5" stroke="#fff" stroke-opacity="0.041"/><path d="M240,446.6L269,441.3L298,435.8L327,430.1L356,424.1L385,418L414,411.7L443,405.3L472,398.9L501,392.5L530,386.3L559,380.2L588,374.3L617,368.7L646,363.3L675,358L704,352.9L733,347.7L762,342.4L791,337L820,331.4L849,325.6L878,319.6L907,313.4L936,307L965,300.6L994,294.2L1023,287.9L1052,281.7L1081,275.7L1110,270L1139,264.5L1168,259.2L1197,253.9L1226,248.8L1255,243.6L1284,238.2L1313,232.8L1342,227.1L1371,221.1L1400,215" stroke="#fff" stroke-opacity="0.022"/><path d="M240,456.1L269,450.7L298,445.6L327,440.6L356,435.6L385,430.7L414,425.6L443,420.4L472,414.9L501,409.2L530,403.2L559,396.9L588,390.4L617,383.8L646,377.1L675,370.5L704,364L733,357.6L762,351.5L791,345.7L820,340.2L849,334.9L878,329.8L907,324.8L936,319.9L965,314.9L994,309.8L1023,304.5L1052,299L1081,293.2L1110,287.1L1139,280.7L1168,274.2L1197,267.6L1226,260.9L1255,254.3L1284,247.8L1313,241.5L1342,235.5L1371,229.8L1400,224.3" stroke="#fff" stroke-opacity="0.038"/><path d="M240,466.4L269,459.5L298,453.5L327,448.6L356,444.3L385,440.1L414,435.4L443,429.7L472,423.1L501,415.7L530,408.3L559,401.5L588,395.5L617,390.6L646,386.4L675,382.2L704,377.4L733,371.7L762,365L791,357.6L820,350.2L849,343.4L878,337.6L907,332.7L936,328.5L965,324.3L994,319.5L1023,313.7L1052,306.9L1081,299.5L1110,292.1L1139,285.4L1168,279.6L1197,274.8L1226,270.6L1255,266.4L1284,261.5L1313,255.7L1342,248.8L1371,241.4L1400,234.1" stroke="#fff" stroke-opacity="0.021"/><path d="M240,476.5L269,471.1L298,465.8L327,460.4L356,455L385,449.5L414,443.8L443,437.9L472,431.9L501,425.8L530,419.6L559,413.3L588,407.1L617,400.8L646,394.7L675,388.7L704,382.8L733,377.1L762,371.6L791,366.2L820,360.8L849,355.5L878,350.1L907,344.7L936,339.2L965,333.5L994,327.7L1023,321.8L1052,315.7L1081,309.5L1110,303.2L1139,297L1168,290.7L1197,284.6L1226,278.5L1255,272.6L1284,266.9L1313,261.3L1342,255.8L1371,250.5L1400,245.1" stroke="#fff" stroke-opacity="0.035"/><path d="M240,485.9L269,479.8L298,473.6L327,467.3L356,461.1L385,455L414,449.1L443,443.4L472,437.9L501,432.6L530,427.3L559,421.9L588,416.3L617,410.5L646,404.5L675,398.3L704,392L733,385.8L762,379.6L791,373.7L820,368L849,362.4L878,357.1L907,351.8L936,346.4L965,340.9L994,335.1L1023,329.1L1052,323L1081,316.7L1110,310.5L1139,304.3L1168,298.3L1197,292.5L1226,287L1255,281.6L1284,276.3L1313,270.9L1342,265.4L1371,259.7L1400,253.8" stroke="#000" stroke-opacity="0.031"/><path d="M240,498.2L269,491.5L298,484.8L327,478.2L356,471.9L385,465.9L414,460.3L443,455.1L472,450.1L501,445.3L530,440.4L559,435.3L588,429.9L617,424.1L646,418L675,411.5L704,404.9L733,398.1L762,391.5L791,385L820,378.9L849,373.2L878,367.9L907,362.8L936,357.9L965,353L994,348L1023,342.8L1052,337.2L1081,331.2L1110,324.8L1139,318.2L1168,311.5L1197,304.8L1226,298.2L1255,292L1284,286.1L1313,280.7L1342,275.5L1371,270.6L1400,265.7" stroke="#fff" stroke-opacity="0.028"/><path d="M240,506.4L269,500.3L298,494.1L327,487.8L356,481.4L385,475.1L414,468.8L443,462.6L472,456.5L501,450.6L530,444.8L559,439.2L588,433.8L617,428.5L646,423.2L675,418L704,412.7L733,407.3L762,401.9L791,396.3L820,390.5L849,384.5L878,378.4L907,372.2L936,365.9L965,359.5L994,353.2L1023,346.9L1052,340.7L1081,334.7L1110,328.8L1139,323L1168,317.5L1197,312L1226,306.7L1255,301.5L1284,296.2L1313,290.9L1342,285.6L1371,280.1L1400,274.5" stroke="#000" stroke-opacity="0.051"/><path d="M240,516.3L269,510.2L298,503.6L327,496.8L356,490.2L385,484.1L414,478.5L443,473.3L472,468.4L501,463.5L530,458.3L559,452.5L588,446.2L617,439.5L646,432.8L675,426.3L704,420.3L733,414.8L762,409.8L791,404.9L820,399.9L849,394.5L878,388.6L907,382.2L936,375.5L965,368.8L994,362.4L1023,356.5L1052,351.2L1081,346.2L1110,341.3L1139,336.3L1168,330.7L1197,324.7L1226,318.2L1255,311.4L1284,304.8L1313,298.5L1342,292.8L1371,287.6L1400,282.7" stroke="#fff" stroke-opacity="0.040"/><path d="M240,523L269,518L298,513.5L327,509.1L356,504.5L385,499.5L414,493.7L443,487.4L472,480.5L501,473.3L530,466.1L559,459.4L588,453.2L617,447.7L646,442.8L675,438.3L704,433.9L733,429.2L762,424.1L791,418.3L820,411.8L849,404.9L878,397.7L907,390.6L936,383.9L965,377.8L994,372.4L1023,367.6L1052,363.1L1081,358.7L1110,354L1139,348.7L1168,342.8L1197,336.3L1226,329.3L1255,322.1L1284,315L1313,308.4L1342,302.4L1371,297.1L1400,292.3" stroke="#000" stroke-opacity="0.039"/><path d="M240,532.6L269,527.4L298,522.3L327,517L356,511.6L385,506L414,500.2L443,494.2L472,488L501,481.6L530,475.2L559,468.8L588,462.4L617,456.2L646,450.2L675,444.4L704,438.8L733,433.4L762,428.1L791,422.9L820,417.8L849,412.5L878,407.1L907,401.6L936,395.8L965,389.8L994,383.6L1023,377.3L1052,370.9L1081,364.5L1110,358.1L1139,351.9L1168,345.8L1197,340L1226,334.3L1255,328.9L1284,323.6L1313,318.4L1342,313.3L1371,308L1400,302.7" stroke="#fff" stroke-opacity="0.028"/><path d="M240,544.7L269,540L298,535.4L327,530.4L356,524.7L385,518.3L414,511.4L443,504.4L472,497.9L501,492L530,486.9L559,482.2L588,477.6L617,472.5L646,466.7L675,460.1L704,453.2L733,446.2L762,439.8L791,434.1L820,429.1L849,424.5L878,419.8L907,414.5L936,408.6L965,401.9L994,394.9L1023,388.1L1052,381.8L1081,376.2L1110,371.3L1139,366.7L1168,361.9L1197,356.6L1226,350.4L1255,343.7L1284,336.7L1313,329.9L1342,323.8L1371,318.4L1400,313.6" stroke="#000" stroke-opacity="0.051"/><path d="M240,558.2L269,551.4L298,544.6L327,538L356,531.7L385,525.9L414,520.6L443,515.6L472,510.8L501,505.9L530,500.8L559,495.4L588,489.4L617,483L646,476.4L675,469.6L704,462.9L733,456.5L762,450.5L791,445L820,439.9L849,435L878,430.2L907,425.2L936,419.9L965,414.1L994,407.9L1023,401.3L1052,394.5L1081,387.8L1110,381.2L1139,375.1L1168,369.4L1197,364.2L1226,359.2L1255,354.4L1284,349.6L1313,344.4L1342,338.8L1371,332.7L1400,326.2" stroke="#000" stroke-opacity="0.026"/><path d="M240,565.5L269,559.5L298,553.6L327,547.8L356,542L385,536.4L414,530.8L443,525.3L472,519.8L501,514.3L530,508.8L559,503.2L588,497.6L617,491.9L646,486L675,480.1L704,474.1L733,468.1L762,462L791,455.9L820,449.8L849,443.7L878,437.7L907,431.8L936,426L965,420.2L994,414.6L1023,409L1052,403.4L1081,397.9L1110,392.5L1139,386.9L1168,381.4L1197,375.8L1226,370L1255,364.2L1284,358.4L1313,352.4L1342,346.3L1371,340.3L1400,334.1" stroke="#000" stroke-opacity="0.029"/><path d="M240,577.8L269,572.4L298,566.9L327,561.1L356,555.1L385,548.9L414,542.5L443,536.1L472,529.6L501,523.3L530,517L559,511L588,505.1L617,499.5L646,494.1L675,488.8L704,483.7L733,478.5L762,473.3L791,468L820,462.4L849,456.7L878,450.7L907,444.6L936,438.3L965,431.8L994,425.4L1023,419L1052,412.7L1081,406.6L1110,400.7L1139,395L1168,389.6L1197,384.3L1226,379.1L1255,374L1284,368.8L1313,363.5L1342,358L1371,352.3L1400,346.4" stroke="#fff" stroke-opacity="0.039"/><path d="M240,586.1L269,580.2L298,574.6L327,569.1L356,563.8L385,558.5L414,553.3L443,547.9L472,542.3L501,536.6L530,530.6L559,524.5L588,518.2L617,511.8L646,505.5L675,499.3L704,493.2L733,487.4L762,481.8L791,476.4L820,471.1L849,465.8L878,460.5L907,455.1L936,449.6L965,443.8L994,437.8L1023,431.6L1052,425.3L1081,419L1110,412.7L1139,406.5L1168,400.4L1197,394.6L1226,389L1255,383.6L1284,378.3L1313,373.1L1342,367.8L1371,362.4L1400,356.8" stroke="#000" stroke-opacity="0.025"/><path d="M240,598.3L269,593.2L298,587.9L327,582.3L356,576.5L385,570.3L414,563.9L443,557.5L472,551.1L501,544.9L530,539.1L559,533.5L588,528.2L617,523.1L646,517.9L675,512.6L704,507L733,501L762,494.8L791,488.4L820,481.9L849,475.6L878,469.5L907,463.7L936,458.2L965,452.9L994,447.8L1023,442.6L1052,437.2L1081,431.6L1110,425.6L1139,419.3L1168,412.9L1197,406.4L1226,400.1L1255,394.1L1284,388.3L1313,382.9L1342,377.7L1371,372.5L1400,367.3" stroke="#fff" stroke-opacity="0.037"/><path d="M240,610.7L269,604L298,597.2L327,590.3L356,583.7L385,577.3L414,571.4L443,565.9L472,560.9L501,556.1L530,551.3L559,546.5L588,541.4L617,535.8L646,529.8L675,523.4L704,516.7L733,509.8L762,503L791,496.4L820,490.2L849,484.5L878,479.2L907,474.2L936,469.5L965,464.7L994,459.8L1023,454.5L1052,448.8L1081,442.6L1110,436.1L1139,429.3L1168,422.4L1197,415.7L1226,409.2L1255,403.2L1284,397.6L1313,392.4L1342,387.6L1371,382.8L1400,378.1" stroke="#000" stroke-opacity="0.052"/><path d="M240,623.7L269,617.6L298,610.8L327,603.6L356,596.5L385,589.9L414,584.1L443,579.1L472,574.6L501,570.2L530,565.4L559,559.9L588,553.5L617,546.5L646,539.3L675,532.3L704,526L733,520.5L762,515.7L791,511.3L820,506.8L849,501.8L878,496L907,489.3L936,482.2L965,475L994,468.2L1023,462.2L1052,457L1081,452.4L1110,448L1139,443.4L1168,438.1L1197,431.9L1226,425.1L1255,417.9L1284,410.8L1313,404.3L1342,398.5L1371,393.6L1400,389.1" stroke="#fff" stroke-opacity="0.035"/><path d="M240,631.8L269,626.2L298,620.4L327,614.5L356,608.4L385,602.1L414,595.8L443,589.4L472,583L501,576.6L530,570.3L559,564.2L588,558.2L617,552.3L646,546.7L675,541.2L704,535.8L733,530.5L762,525.3L791,520.1L820,514.9L849,509.6L878,504.2L907,498.6L936,492.8L965,486.9L994,480.8L1023,474.5L1052,468.2L1081,461.8L1110,455.4L1139,449L1168,442.7L1197,436.6L1226,430.6L1255,424.7L1284,419.1L1313,413.6L1342,408.2L1371,402.9L1400,397.7" stroke="#000" stroke-opacity="0.053"/><path d="M240,641.8L269,636L298,630L327,623.9L356,617.7L385,611.5L414,605.2L443,599L472,592.9L501,586.9L530,581L559,575.3L588,569.7L617,564.2L646,558.8L675,553.5L704,548.1L733,542.7L762,537.2L791,531.6L820,525.8L849,519.9L878,513.9L907,507.8L936,501.5L965,495.3L994,489.1L1023,482.9L1052,476.8L1081,470.8L1110,465L1139,459.4L1168,453.8L1197,448.4L1226,443L1255,437.6L1284,432.3L1313,426.8L1342,421.3L1371,415.6L1400,409.8" stroke="#fff" stroke-opacity="0.035"/><path d="M240,650.4L269,644.1L298,637.8L327,631.3L356,624.7L385,618.2L414,611.7L443,605.3L472,599.1L501,593L530,587.1L559,581.4L588,575.9L617,570.6L646,565.4L675,560.3L704,555.3L733,550.2L762,545.1L791,539.8L820,534.4L849,528.9L878,523.1L907,517.1L936,511L965,504.7L994,498.3L1023,491.7L1052,485.2L1081,478.7L1110,472.2L1139,465.9L1168,459.7L1197,453.7L1226,447.9L1255,442.4L1284,436.9L1313,431.7L1342,426.5L1371,421.5L1400,416.4" stroke="#fff" stroke-opacity="0.033"/><path d="M240,653.4L269,647.6L298,642L327,636.7L356,631.5L385,626.5L414,621.5L443,616.5L472,611.4L501,606.2L530,600.8L559,595.2L588,589.3L617,583.2L646,576.9L675,570.5L704,563.9L733,557.3L762,550.7L791,544.2L820,537.8L849,531.7L878,525.7L907,520L936,514.6L965,509.3L994,504.2L1023,499.2L1052,494.2L1081,489.2L1110,484L1139,478.8L1168,473.3L1197,467.6L1226,461.6L1255,455.5L1284,449.1L1313,442.6L1342,436L1371,429.4L1400,422.8" stroke="#000" stroke-opacity="0.027"/><path d="M240,665.3L269,658.6L298,652.2L327,646.1L356,640.4L385,635L414,630L443,625.1L472,620.3L501,615.4L530,610.2L559,604.7L588,598.9L617,592.6L646,586.1L675,579.4L704,572.6L733,565.9L762,559.4L791,553.3L820,547.6L849,542.2L878,537.1L907,532.2L936,527.4L965,522.5L994,517.4L1023,511.9L1052,506.1L1081,499.9L1110,493.3L1139,486.6L1168,479.8L1197,473.1L1226,466.7L1255,460.5L1284,454.7L1313,449.3L1342,444.3L1371,439.4L1400,434.6" stroke="#000" stroke-opacity="0.049"/><path d="M240,678.5L269,672.1L298,665.7L327,659.4L356,653.2L385,647.3L414,641.6L443,636.2L472,631L501,625.8L530,620.5L559,615.1L588,609.4L617,603.4L646,597.1L675,590.8L704,584.4L733,578.1L762,571.9L791,566.1L820,560.5L849,555.1L878,549.9L907,544.7L936,539.4L965,533.9L994,528.1L1023,522.1L1052,515.8L1081,509.4L1110,503L1139,496.8L1168,490.7L1197,484.9L1226,479.4L1255,474.1L1284,468.9L1313,463.7L1342,458.3L1371,452.7L1400,446.9" stroke="#000" stroke-opacity="0.029"/><path d="M240,688.3L269,683.1L298,677.8L327,672.2L356,666.5L385,660.5L414,654.4L443,648L472,641.6L501,635.1L530,628.6L559,622.1L588,615.8L617,609.6L646,603.6L675,597.8L704,592.2L733,586.8L762,581.6L791,576.5L820,571.4L849,566.3L878,561.1L907,555.8L936,550.3L965,544.7L994,538.8L1023,532.7L1052,526.5L1081,520.1L1110,513.6L1139,507.1L1168,500.6L1197,494.2L1226,487.9L1255,481.9L1284,476L1313,470.3L1342,464.9L1371,459.6L1400,454.4" stroke="#000" stroke-opacity="0.053"/><path d="M240,701L269,695.2L298,689.1L327,682.7L356,676.3L385,670L414,663.9L443,658.2L472,652.7L501,647.4L530,642.2L559,636.9L588,631.4L617,625.6L646,619.5L675,613.1L704,606.7L733,600.4L762,594.3L791,588.5L820,583.1L849,577.8L878,572.6L907,567.3L936,561.8L965,556L994,549.9L1023,543.6L1052,537.2L1081,530.8L1110,524.7L1139,518.9L1168,513.4L1197,508.2L1226,503L1255,497.7L1284,492.2L1313,486.4L1342,480.3L1371,474L1400,467.6" stroke="#fff" stroke-opacity="0.027"/><path d="M240,709.7L269,704.4L298,699.2L327,694L356,688.7L385,683.2L414,677.6L443,671.8L472,665.8L501,659.7L530,653.4L559,647.1L588,640.7L617,634.3L646,628L675,621.7L704,615.6L733,609.7L762,603.9L791,598.4L820,592.9L849,587.6L878,582.4L907,577.2L936,571.9L965,566.7L994,561.2L1023,555.7L1052,550L1081,544.1L1110,538L1139,531.9L1168,525.5L1197,519.2L1226,512.8L1255,506.4L1284,500.1L1313,494L1342,487.9L1371,482.1L1400,476.4" stroke="#000" stroke-opacity="0.034"/><path d="M240,721.4L269,714.4L298,707.9L327,702.2L356,697.3L385,692.8L414,688.5L443,683.8L472,678.6L501,672.7L530,666L559,658.8L588,651.5L617,644.6L646,638.3L675,632.7L704,627.9L733,623.4L762,619.1L791,614.4L820,609.1L849,602.9L878,596.2L907,588.9L936,581.7L965,574.9L994,568.7L1023,563.2L1052,558.5L1081,554.1L1110,549.7L1139,544.9L1168,539.5L1197,533.2L1226,526.3L1255,519.1L1284,511.9L1313,505.1L1342,499.1L1371,493.8L1400,489.1" stroke="#fff" stroke-opacity="0.043"/><path d="M240,732.2L269,726.9L298,721.6L327,716.1L356,710.5L385,704.6L414,698.6L443,692.4L472,686.1L501,679.8L530,673.5L559,667.3L588,661.3L617,655.5L646,649.8L675,644.4L704,639L733,633.7L762,628.4L791,623.1L820,617.6L849,611.9L878,606L907,599.9L936,593.7L965,587.4L994,581.1L1023,574.8L1052,568.7L1081,562.7L1110,556.9L1139,551.3L1168,545.9L1197,540.5L1226,535.2L1255,529.9L1284,524.5L1313,519L1342,513.3L1371,507.3L1400,501.2" stroke="#000" stroke-opacity="0.043"/><path d="M240,746.6L269,740.1L298,733.5L327,726.8L356,720.3L385,714.1L414,708.2L443,702.7L472,697.5L501,692.5L530,687.6L559,682.5L588,677.3L617,671.7L646,665.7L675,659.5L704,652.9L733,646.3L762,639.6L791,633.2L820,627.1L849,621.3L878,615.8L907,610.7L936,605.7L965,600.8L994,595.7L1023,590.4L1052,584.7L1081,578.6L1110,572.3L1139,565.7L1168,559L1197,552.5L1226,546.1L1255,540L1284,534.3L1313,529L1342,523.9L1371,519L1400,514" stroke="#000" stroke-opacity="0.042"/><path d="M240,755.3L269,749.8L298,744.5L327,739.1L356,733.6L385,728L414,722.2L443,716.3L472,710.3L501,704.1L530,697.9L559,691.7L588,685.5L617,679.5L646,673.6L675,667.8L704,662.2L733,656.7L762,651.3L791,645.9L820,640.5L849,635L878,629.4L907,623.6L936,617.7L965,611.6L994,605.4L1023,599.2L1052,593L1081,586.9L1110,580.9L1139,575L1168,569.2L1197,563.6L1226,558.2L1255,552.8L1284,547.4L1313,542L1342,536.5L1371,530.8L1400,525" stroke="#fff" stroke-opacity="0.043"/><path d="M240,765.7L269,759.8L298,753.3L327,746.4L356,739.5L385,733L414,727.1L443,721.8L472,717L501,712.3L530,707.4L559,701.9L588,695.8L617,689.1L646,682.1L675,675.4L704,669.1L733,663.4L762,658.4L791,653.7L820,649L849,643.8L878,638.1L907,631.7L936,624.8L965,617.9L994,611.3L1023,605.2L1052,599.9L1081,595L1110,590.3L1139,585.5L1168,580.1L1197,574.1L1226,567.5L1255,560.5L1284,553.7L1313,547.3L1342,541.5L1371,536.4L1400,531.7" stroke="#fff" stroke-opacity="0.040"/><path d="M240,774.5L269,768.1L298,761.5L327,754.8L356,748.4L385,742.5L414,737L443,731.9L472,727L501,722L530,716.7L559,710.9L588,704.7L617,698.2L646,691.5L675,684.9L704,678.7L733,673L762,667.7L791,662.7L820,657.7L849,652.6L878,647.1L907,641.2L936,634.8L965,628.2L994,621.5L1023,615.1L1052,609.1L1081,603.5L1110,598.4L1139,593.4L1168,588.5L1197,583.2L1226,577.5L1255,571.4L1284,564.9L1313,558.2L1342,551.6L1371,545.3L1400,539.5" stroke="#000" stroke-opacity="0.053"/><path d="M240,784.2L269,778.9L298,773.6L327,768.2L356,762.4L385,756.3L414,750.1L443,743.7L472,737.4L501,731.3L530,725.6L559,720.1L588,714.8L617,709.6L646,704.2L675,698.6L704,692.7L733,686.6L762,680.2L791,673.9L820,667.7L849,661.7L878,656.1L907,650.7L936,645.4L965,640.1L994,634.7L1023,629L1052,623L1081,616.8L1110,610.4L1139,604.1L1168,598L1197,592.1L1226,586.6L1255,581.3L1284,576L1313,570.7L1342,565.2L1371,559.4L1400,553.3" stroke="#000" stroke-opacity="0.046"/><path d="M240,792.5L269,785.6L298,779.2L327,773.7L356,768.9L385,764.4L414,759.8L443,754.7L472,748.7L501,742L530,734.9L559,727.8L588,721.3L617,715.5L646,710.6L675,706.1L704,701.5L733,696.6L762,690.8L791,684.3L820,677.2L849,670.1L878,663.4L907,657.5L936,652.3L965,647.7L994,643.2L1023,638.4L1052,632.9L1081,626.5L1110,619.6L1139,612.4L1168,605.6L1197,599.4L1226,594.1L1255,589.4L1284,584.9L1313,580.2L1342,574.9L1371,568.8L1400,561.9" stroke="#fff" stroke-opacity="0.023"/><path d="M240,800.2L269,794.9L298,789.7L327,784.3L356,778.8L385,773.2L414,767.4L443,761.3L472,755.2L501,748.9L530,742.5L559,736.3L588,730.1L617,724.1L646,718.2L675,712.6L704,707.1L733,701.8L762,696.5L791,691.2L820,685.8L849,680.3L878,674.6L907,668.7L936,662.6L965,656.4L994,650.1L1023,643.8L1052,637.5L1081,631.4L1110,625.4L1139,619.7L1168,614.1L1197,608.6L1226,603.3L1255,598L1284,592.7L1313,587.3L1342,581.8L1371,576L1400,570.1" stroke="#000" stroke-opacity="0.036"/><path d="M240,811.7L269,805.4L298,798.9L327,792.4L356,786.1L385,780.2L414,774.6L443,769.4L472,764.2L501,759.1L530,753.7L559,748L588,742L617,735.6L646,729.1L675,722.7L704,716.5L733,710.6L762,705.1L791,699.9L820,694.8L849,689.6L878,684.2L907,678.4L936,672.3L965,665.8L994,659.4L1023,653L1052,646.8L1081,641.1L1110,635.6L1139,630.5L1168,625.4L1197,620.1L1226,614.6L1255,608.7L1284,602.5L1313,596.1L1342,589.6L1371,583.3L1400,577.2" stroke="#fff" stroke-opacity="0.035"/><path d="M240,821L269,814.8L298,808.7L327,802.9L356,797.2L385,791.6L414,786.3L443,781L472,775.9L501,770.7L530,765.5L559,760.2L588,754.8L617,749.2L646,743.5L675,737.6L704,731.4L733,725.2L762,718.8L791,712.4L820,706L849,699.6L878,693.3L907,687.1L936,681.1L965,675.3L994,669.6L1023,664.2L1052,658.9L1081,653.6L1110,648.5L1139,643.3L1168,638.1L1197,632.8L1226,627.3L1255,621.7L1284,615.9L1313,609.9L1342,603.7L1371,597.4L1400,591" stroke="#fff" stroke-opacity="0.038"/><path d="M240,834.4L269,827.9L298,821.7L327,815.8L356,810.2L385,804.9L414,799.8L443,794.8L472,789.6L501,784.2L530,778.4L559,772.3L588,765.9L617,759.3L646,752.8L675,746.5L704,740.4L733,734.7L762,729.3L791,724.1L820,719.1L849,714L878,708.6L907,703L936,697.1L965,690.8L994,684.3L1023,677.7L1052,671.3L1081,665.1L1110,659.2L1139,653.6L1168,648.4L1197,643.3L1226,638.3L1255,633.1L1284,627.6L1313,621.8L1342,615.6L1371,609.2L1400,602.7" stroke="#fff" stroke-opacity="0.025"/><path d="M240,847.8L269,841.4L298,834.9L327,828.6L356,822.6L385,816.8L414,811.4L443,806.2L472,801L501,795.7L530,790.2L559,784.4L588,778.3L617,771.9L646,765.5L675,759.1L704,753L733,747.2L762,741.6L791,736.4L820,731.2L849,726L878,720.6L907,714.9L936,708.8L965,702.5L994,696.1L1023,689.7L1052,683.5L1081,677.5L1110,671.9L1139,666.6L1168,661.4L1197,656.2L1226,650.9L1255,645.3L1284,639.3L1313,633.1L1342,626.7L1371,620.3L1400,614" stroke="#000" stroke-opacity="0.033"/><path d="M240,858.5L269,852.2L298,845.9L327,839.8L356,833.8L385,828L414,822.4L443,816.9L472,811.5L501,806.2L530,801L559,795.7L588,790.4L617,785L646,779.4L675,773.7L704,767.8L733,761.7L762,755.5L791,749.2L820,742.9L849,736.5L878,730.2L907,724L936,717.9L965,712L994,706.2L1023,700.6L1052,695.2L1081,689.9L1110,684.6L1139,679.4L1168,674.1L1197,668.7L1226,663.3L1255,657.6L1284,651.9L1313,645.9L1342,639.8L1371,633.6L1400,627.2" stroke="#fff" stroke-opacity="0.030"/><path d="M240,866.1L269,860L298,853.8L327,847.5L356,841.3L385,835.1L414,829L443,823L472,817.2L501,811.5L530,805.9L559,800.5L588,795.2L617,789.8L646,784.5L675,779L704,773.5L733,767.8L762,761.9L791,755.9L820,749.8L849,743.6L878,737.3L907,731.1L936,724.9L965,718.8L994,712.8L1023,707L1052,701.3L1081,695.7L1110,690.3L1139,684.9L1168,679.6L1197,674.2L1226,668.8L1255,663.2L1284,657.6L1313,651.7L1342,645.7L1371,639.6L1400,633.4" stroke="#000" stroke-opacity="0.054"/><path d="M240,876.9L269,871.2L298,865.2L327,858.8L356,852.2L385,845.5L414,838.7L443,832.1L472,825.8L501,819.8L530,814.1L559,808.8L588,803.8L617,799L646,794.1L675,789.1L704,783.9L733,778.4L762,772.5L791,766.2L820,759.7L849,753L878,746.2L907,739.6L936,733.1L965,727L994,721.3L1023,715.9L1052,710.8L1081,705.9L1110,701L1139,696.1L1168,691L1197,685.6L1226,679.8L1255,673.6L1284,667.1L1313,660.5L1342,653.7L1371,647L1400,640.5" stroke="#000" stroke-opacity="0.031"/><path d="M240,881.2L269,875.8L298,870.4L327,864.8L356,859.1L385,853.3L414,847.3L443,841.2L472,835L501,828.8L530,822.7L559,816.6L588,810.6L617,804.8L646,799.1L675,793.5L704,788L733,782.6L762,777.2L791,771.8L820,766.2L849,760.5L878,754.7L907,748.7L936,742.6L965,736.5L994,730.3L1023,724.1L1052,718L1081,712L1110,706.2L1139,700.5L1168,694.9L1197,689.4L1226,684L1255,678.6L1284,673.1L1313,667.6L1342,661.9L1371,656.1L1400,650.1" stroke="#000" stroke-opacity="0.042"/><path d="M240,889.5L269,883.4L298,877.2L327,871L356,864.8L385,858.6L414,852.6L443,846.6L472,840.7L501,835L530,829.4L559,823.8L588,818.4L617,813L646,807.6L675,802.2L704,796.7L733,791.2L762,785.5L791,779.7L820,773.8L849,767.8L878,761.7L907,755.6L936,749.4L965,743.1L994,737L1023,730.9L1052,724.8L1081,718.9L1110,713.1L1139,707.5L1168,701.9L1197,696.4L1226,691L1255,685.6L1284,680.2L1313,674.8L1342,669.3L1371,663.7L1400,657.9" stroke="#000" stroke-opacity="0.053"/><path d="M240,897.8L269,891.4L298,884.8L327,877.9L356,870.9L385,864.1L414,857.6L443,851.5L472,845.8L501,840.6L530,835.7L559,831.1L588,826.4L617,821.6L646,816.4L675,810.9L704,804.8L733,798.4L762,791.6L791,784.7L820,777.8L849,771L878,764.6L907,758.7L936,753.2L965,748.1L994,743.3L1023,738.6L1052,733.9L1081,729L1110,723.8L1139,718L1168,711.9L1197,705.3L1226,698.5L1255,691.5L1284,684.6L1313,678L1342,671.7L1371,665.9L1400,660.6" stroke="#000" stroke-opacity="0.035"/><path d="M240,904.8L269,898.4L298,892L327,885.7L356,879.6L385,873.7L414,868.1L443,862.6L472,857.4L501,852.2L530,847L559,841.8L588,836.5L617,831L646,825.2L675,819.2L704,813.1L733,806.7L762,800.3L791,793.8L820,787.4L849,781.2L878,775.2L907,769.3L936,763.7L965,758.3L994,753.1L1023,747.9L1052,742.8L1081,737.6L1110,732.2L1139,726.6L1168,720.8L1197,714.8L1226,708.5L1255,702.2L1284,695.7L1313,689.3L1342,682.9L1371,676.7L1400,670.7" stroke="#fff" stroke-opacity="0.037"/><path d="M240,910.1L269,904.7L298,899.3L327,894.1L356,888.9L385,883.7L414,878.4L443,872.9L472,867.3L501,861.5L530,855.5L559,849.4L588,843.1L617,836.7L646,830.3L675,824L704,817.7L733,811.5L762,805.6L791,799.8L820,794.2L849,788.7L878,783.4L907,778.2L936,773L965,767.7L994,762.4L1023,757L1052,751.3L1081,745.5L1110,739.5L1139,733.3L1168,727L1197,720.7L1226,714.3L1255,707.9L1284,701.6L1313,695.5L1342,689.5L1371,683.8L1400,678.2" stroke="#000" stroke-opacity="0.031"/><path d="M240,922.3L269,916.6L298,910.9L327,905L356,899L385,893L414,887L443,880.9L472,874.8L501,868.7L530,862.7L559,856.7L588,850.8L617,845L646,839.3L675,833.6L704,828L733,822.4L762,816.9L791,811.4L820,805.9L849,800.3L878,794.7L907,789L936,783.3L965,777.4L994,771.5L1023,765.5L1052,759.4L1081,753.4L1110,747.3L1139,741.2L1168,735.1L1197,729.2L1226,723.2L1255,717.4L1284,711.6L1313,706L1342,700.3L1371,694.8L1400,689.3" stroke="#fff" stroke-opacity="0.037"/><path d="M240,931.5L269,926.3L298,921.1L327,915.8L356,910.3L385,904.6L414,898.7L443,892.6L472,886.3L501,879.9L530,873.5L559,867.1L588,860.8L617,854.7L646,848.8L675,843.2L704,837.7L733,832.4L762,827.2L791,822.1L820,816.9L849,811.5L878,806L907,800.2L936,794.3L965,788.1L994,781.8L1023,775.3L1052,768.9L1081,762.5L1110,756.3L1139,750.3L1168,744.4L1197,738.8L1226,733.4L1255,728.2L1284,723L1313,717.8L1342,712.6L1371,707.2L1400,701.6" stroke="#fff" stroke-opacity="0.044"/><path d="M240,942.3L269,936.7L298,930.8L327,924.6L356,918.2L385,911.6L414,905L443,898.3L472,891.7L501,885.2L530,879L559,873L588,867.3L617,861.9L646,856.7L675,851.7L704,846.7L733,841.8L762,836.8L791,831.7L820,826.3L849,820.7L878,814.8L907,808.6L936,802.2L965,795.6L994,788.9L1023,782.3L1052,775.7L1081,769.2L1110,763L1139,757L1168,751.3L1197,745.9L1226,740.7L1255,735.7L1284,730.8L1313,725.9L1342,720.8L1371,715.7L1400,710.3" stroke="#000" stroke-opacity="0.049"/><path d="M240,954.5L269,948.9L298,942.9L327,936.7L356,930.3L385,923.6L414,916.9L443,910.3L472,903.7L501,897.3L530,891.2L559,885.4L588,879.8L617,874.6L646,869.5L675,864.6L704,859.7L733,854.7L762,849.6L791,844.3L820,838.7L849,832.8L878,826.6L907,820.2L936,813.6L965,806.9L994,800.2L1023,793.6L1052,787.2L1081,781.1L1110,775.2L1139,769.6L1168,764.2L1197,759.1L1226,754.2L1255,749.3L1284,744.3L1313,739.3L1342,734L1371,728.5L1400,722.6" stroke="#000" stroke-opacity="0.048"/><path d="M240,963.4L269,958L298,952.5L327,946.7L356,940.7L385,934.5L414,928.2L443,921.9L472,915.7L501,909.7L530,903.9L559,898.3L588,892.9L617,887.6L646,882.3L675,876.9L704,871.3L733,865.5L762,859.4L791,853.2L820,846.9L849,840.6L878,834.4L907,828.4L936,822.7L965,817.2L994,811.8L1023,806.5L1052,801.2L1081,795.7L1110,790.1L1139,784.3L1168,778.2L1197,771.9L1226,765.6L1255,759.3L1284,753.2L1313,747.2L1342,741.5L1371,736L1400,730.7" stroke="#000" stroke-opacity="0.025"/><path d="M240,971.9L269,965.5L298,959.7L327,954.4L356,949.6L385,944.9L414,940.1L443,935L472,929.3L501,923L530,916.2L559,909.3L588,902.4L617,896L646,890L675,884.7L704,879.8L733,875.1L762,870.4L791,865.3L820,859.7L849,853.5L878,846.8L907,839.9L936,833L965,826.4L994,820.4L1023,814.9L1052,810L1081,805.3L1110,800.6L1139,795.6L1168,790.1L1197,784L1226,777.4L1255,770.5L1284,763.6L1313,757L1342,750.8L1371,745.2L1400,740.2" stroke="#000" stroke-opacity="0.045"/><path d="M240,982.6L269,977.5L298,972.5L327,967.5L356,962.4L385,957L414,951.4L443,945.5L472,939.3L501,932.9L530,926.3L559,919.7L588,913.2L617,906.9L646,900.8L675,895L704,889.4L733,884.2L762,879.1L791,874.1L820,869.1L849,863.9L878,858.5L907,852.8L936,846.8L965,840.6L994,834.1L1023,827.5L1052,820.9L1081,814.5L1110,808.2L1139,802.1L1168,796.4L1197,791L1226,785.8L1255,780.7L1284,775.7L1313,770.6L1342,765.4L1371,759.9L1400,754.2" stroke="#fff" stroke-opacity="0.044"/><path d="M240,996.8L269,990.4L298,984L327,977.5L356,971.1L385,964.7L414,958.3L443,952.1L472,946.1L501,940.3L530,934.6L559,929.1L588,923.7L617,918.5L646,913.3L675,908.2L704,903L733,897.8L762,892.5L791,887.1L820,881.5L849,875.7L878,869.7L907,863.6L936,857.3L965,850.9L994,844.5L1023,838L1052,831.6L1081,825.2L1110,818.9L1139,812.8L1168,806.9L1197,801.1L1226,795.5L1255,790L1284,784.7L1313,779.5L1342,774.4L1371,769.3L1400,764.1" stroke="#fff" stroke-opacity="0.035"/><path d="M240,1003.6L269,998.6L298,992.9L327,986.5L356,979.6L385,972.7L414,966.2L443,960.5L472,955.5L501,950.9L530,946.1L559,940.8L588,934.7L617,927.9L646,920.9L675,914.2L704,908.2L733,902.9L762,898.2L791,893.5L820,888.5L849,882.7L878,876.2L907,869.2L936,862.4L965,856L994,850.4L1023,845.5L1052,840.8L1081,836L1110,830.6L1139,824.4L1168,817.6L1197,810.6L1226,804L1255,798L1284,792.8L1313,788.1L1342,783.4L1371,778.3L1400,772.4" stroke="#000" stroke-opacity="0.036"/><path d="M240,1010.4L269,1005.6L298,1000.7L327,995.6L356,990.1L385,984.3L414,978L443,971.5L472,964.7L501,957.9L530,951.1L559,944.6L588,938.3L617,932.3L646,926.8L675,921.6L704,916.6L733,911.8L762,907L791,902.1L820,897L849,891.5L878,885.7L907,879.4L936,872.9L965,866.2L994,859.3L1023,852.5L1052,846L1081,839.7L1110,833.7L1139,828.2L1168,822.9L1197,818L1226,813.2L1255,808.4L1284,803.5L1313,798.4L1342,792.9L1371,787.1L1400,780.8" stroke="#fff" stroke-opacity="0.043"/><path d="M240,1023.9L269,1017.4L298,1011L327,1004.6L356,998.4L385,992.3L414,986.4L443,980.8L472,975.3L501,970L530,964.8L559,959.6L588,954.5L617,949.3L646,944L675,938.6L704,933L733,927.1L762,921.1L791,914.9L820,908.5L849,902.1L878,895.6L907,889.1L936,882.8L965,876.5L994,870.5L1023,864.6L1052,859L1081,853.5L1110,848.2L1139,843L1168,837.9L1197,832.8L1226,827.6L1255,822.3L1284,816.8L1313,811.2L1342,805.3L1371,799.3L1400,793" stroke="#fff" stroke-opacity="0.034"/><path d="M240,1032.6L269,1026.7L298,1019.9L327,1012.6L356,1005.3L385,998.3L414,992.2L443,986.9L472,982.3L501,978.1L530,973.8L559,968.8L588,962.9L617,956.2L646,949L675,941.6L704,934.6L733,928.3L762,923L791,918.4L820,914.2L849,909.8L878,904.9L907,899.2L936,892.5L965,885.3L994,877.9L1023,870.9L1052,864.6L1081,859.1L1110,854.5L1139,850.2L1168,845.9L1197,841.1L1226,835.4L1255,828.9L1284,821.7L1313,814.3L1342,807.2L1371,800.8L1400,795.3" stroke="#000" stroke-opacity="0.030"/><path d="M240,1039L269,1033.3L298,1027.7L327,1022.1L356,1016.6L385,1011.1L414,1005.6L443,1000.1L472,994.5L501,988.9L530,983.2L559,977.4L588,971.5L617,965.6L646,959.6L675,953.5L704,947.5L733,941.4L762,935.3L791,929.2L820,923.2L849,917.2L878,911.4L907,905.6L936,899.9L965,894.3L994,888.7L1023,883.2L1052,877.7L1081,872.2L1110,866.7L1139,861.1L1168,855.5L1197,849.8L1226,844L1255,838.1L1284,832.2L1313,826.2L1342,820.1L1371,814.1L1400,808" stroke="#fff" stroke-opacity="0.033"/><path d="M240,1048.7L269,1043.4L298,1038.1L327,1032.6L356,1027L385,1021.2L414,1015.2L443,1009.1L472,1002.9L501,996.6L530,990.2L559,983.9L588,977.8L617,971.7L646,965.9L675,960.2L704,954.7L733,949.3L762,944L791,938.7L820,933.4L849,928L878,922.5L907,916.8L936,911L965,904.9L994,898.7L1023,892.5L1052,886.1L1081,879.8L1110,873.6L1139,867.5L1168,861.5L1197,855.7L1226,850.1L1255,844.6L1284,839.3L1313,834L1342,828.7L1371,823.4L1400,817.9" stroke="#fff" stroke-opacity="0.027"/><path d="M240,1055.7L269,1049.9L298,1044.4L327,1039L356,1033.7L385,1028.4L414,1022.9L443,1017.1L472,1011.1L501,1004.9L530,998.6L559,992.3L588,986.2L617,980.3L646,974.7L675,969.2L704,963.9L733,958.6L762,953.2L791,947.5L820,941.6L849,935.5L878,929.2L907,922.9L936,916.7L965,910.7L994,905L1023,899.5L1052,894.1L1081,888.9L1110,883.5L1139,877.9L1168,872.1L1197,866L1226,859.8L1255,853.5L1284,847.2L1313,841.1L1342,835.3L1371,829.7L1400,824.3" stroke="#fff" stroke-opacity="0.024"/><path d="M240,1066.1L269,1059.4L298,1052.8L327,1046.2L356,1039.9L385,1033.7L414,1027.9L443,1022.3L472,1016.9L501,1011.8L530,1006.8L559,1001.9L588,996.9L617,991.9L646,986.6L675,981.2L704,975.4L733,969.4L762,963.2L791,956.7L820,950.1L849,943.4L878,936.8L907,930.2L936,923.9L965,917.7L994,911.9L1023,906.3L1052,900.9L1081,895.8L1110,890.8L1139,885.9L1168,880.9L1197,875.9L1226,870.6L1255,865.2L1284,859.4L1313,853.4L1342,847.2L1371,840.7L1400,834.1" stroke="#fff" stroke-opacity="0.044"/><path d="M240,1072.4L269,1067.6L298,1062.7L327,1057.3L356,1051.5L385,1045.2L414,1038.6L443,1031.7L472,1024.7L501,1017.9L530,1011.4L559,1005.4L588,999.8L617,994.6L646,989.8L675,985.2L704,980.5L733,975.6L762,970.3L791,964.5L820,958.3L849,951.7L878,944.9L907,937.9L936,931.1L965,924.5L994,918.4L1023,912.7L1052,907.5L1081,902.6L1110,897.9L1139,893.3L1168,888.4L1197,883.2L1226,877.6L1255,871.4L1284,864.9L1313,858.1L1342,851.1L1371,844.2L1400,837.6" stroke="#000" stroke-opacity="0.054"/><path d="M240,1079.8L269,1074.8L298,1069.9L327,1065L356,1060L385,1054.9L414,1049.5L443,1043.9L472,1038L501,1031.8L530,1025.3L559,1018.7L588,1012L617,1005.3L646,998.7L675,992.3L704,986.1L733,980.2L762,974.5L791,969.2L820,964.1L849,959.1L878,954.2L907,949.3L936,944.3L965,939.1L994,933.6L1023,927.9L1052,921.9L1081,915.6L1110,909L1139,902.4L1168,895.7L1197,889L1226,882.4L1255,876.1L1284,870L1313,864.2L1342,858.7L1371,853.4L1400,848.4" stroke="#fff" stroke-opacity="0.043"/><path d="M240,1091.2L269,1085.8L298,1080.4L327,1075L356,1069.6L385,1064L414,1058.3L443,1052.4L472,1046.4L501,1040.3L530,1034.1L559,1027.9L588,1021.7L617,1015.6L646,1009.5L675,1003.6L704,997.9L733,992.3L762,986.8L791,981.3L820,976L849,970.6L878,965.1L907,959.6L936,953.9L965,948L994,942.1L1023,936L1052,929.8L1081,923.6L1110,917.4L1139,911.2L1168,905.2L1197,899.2L1226,893.5L1255,887.8L1284,882.3L1313,876.9L1342,871.5L1371,866.1L1400,860.7" stroke="#000" stroke-opacity="0.031"/><path d="M240,1102.7L269,1097L298,1091L327,1084.9L356,1078.6L385,1072.3L414,1066L443,1059.9L472,1053.9L501,1048.1L530,1042.6L559,1037.2L588,1031.8L617,1026.5L646,1021.2L675,1015.7L704,1010L733,1004.1L762,998L791,991.8L820,985.5L849,979.2L878,973L907,967L936,961.1L965,955.5L994,950L1023,944.6L1052,939.3L1081,934L1110,928.6L1139,923L1168,917.2L1197,911.2L1226,905L1255,898.7L1284,892.4L1313,886.1L1342,880L1371,874.1L1400,868.4" stroke="#000" stroke-opacity="0.039"/><path d="M240,1110.9L269,1105.6L298,1100.4L327,1095.1L356,1089.8L385,1084.3L414,1078.6L443,1072.8L472,1066.9L501,1060.7L530,1054.5L559,1048.1L588,1041.8L617,1035.4L646,1029.2L675,1023L704,1017L733,1011.2L762,1005.5L791,1000L820,994.7L849,989.4L878,984.1L907,978.9L936,973.6L965,968.2L994,962.6L1023,956.9L1052,951L1081,944.9L1110,938.7L1139,932.4L1168,926L1197,919.7L1226,913.4L1255,907.2L1284,901.1L1313,895.2L1342,889.4L1371,883.9L1400,878.4" stroke="#fff" stroke-opacity="0.044"/><path d="M240,1121.4L269,1115.5L298,1110.2L327,1105.2L356,1100.2L385,1095.1L414,1089.4L443,1083.3L472,1076.7L501,1070.1L530,1063.6L559,1057.5L588,1051.9L617,1046.8L646,1041.9L675,1036.9L704,1031.4L733,1025.5L762,1019.1L791,1012.4L820,1005.8L849,999.5L878,993.8L907,988.5L936,983.5L965,978.6L994,973.3L1023,967.6L1052,961.4L1081,954.8L1110,948.1L1139,941.7L1168,935.7L1197,930.2L1226,925.2L1255,920.3L1284,915.2L1313,909.6L1342,903.6L1371,897.1L1400,890.4" stroke="#fff" stroke-opacity="0.039"/><path d="M240,1131.3L269,1126L298,1120.6L327,1115.2L356,1109.6L385,1103.8L414,1097.9L443,1091.8L472,1085.6L501,1079.4L530,1073L559,1066.8L588,1060.6L617,1054.5L646,1048.5L675,1042.8L704,1037.2L733,1031.7L762,1026.3L791,1021L820,1015.7L849,1010.4L878,1004.9L907,999.4L936,993.6L965,987.7L994,981.6L1023,975.5L1052,969.2L1081,962.9L1110,956.6L1139,950.4L1168,944.3L1197,938.3L1226,932.6L1255,927L1284,921.5L1313,916.1L1342,910.8L1371,905.5L1400,900.2" stroke="#fff" stroke-opacity="0.034"/><path d="M240,1141.5L269,1135.4L298,1129.7L327,1124.2L356,1119.1L385,1113.9L414,1108.7L443,1103.3L472,1097.5L501,1091.4L530,1085L559,1078.5L588,1072.1L617,1065.9L646,1060L675,1054.4L704,1049.2L733,1044L762,1038.9L791,1033.6L820,1027.9L849,1022L878,1015.7L907,1009.2L936,1002.7L965,996.4L994,990.4L1023,984.7L1052,979.3L1081,974.1L1110,969L1139,963.8L1168,958.3L1197,952.5L1226,946.3L1255,939.9L1284,933.4L1313,927L1342,920.8L1371,915L1400,909.5" stroke="#fff" stroke-opacity="0.042"/><path d="M240,1149.3L269,1143.9L298,1138.3L327,1132.5L356,1126.4L385,1120.1L414,1113.7L443,1107.5L472,1101.4L501,1095.5L530,1089.9L559,1084.6L588,1079.3L617,1074L646,1068.6L675,1062.9L704,1057L733,1050.9L762,1044.6L791,1038.2L820,1032L849,1025.9L878,1020.2L907,1014.6L936,1009.3L965,1004L994,998.7L1023,993.3L1052,987.5L1081,981.6L1110,975.4L1139,969L1168,962.7L1197,956.5L1226,950.5L1255,944.8L1284,939.3L1313,934L1342,928.8L1371,923.4L1400,917.9" stroke="#000" stroke-opacity="0.044"/><path d="M240,1158.6L269,1152.1L298,1145.9L327,1140.1L356,1134.8L385,1129.7L414,1124.5L443,1119.1L472,1113.3L501,1107L530,1100.6L559,1094.1L588,1087.9L617,1082.2L646,1076.8L675,1071.7L704,1066.5L733,1061.1L762,1055.3L791,1049L820,1042.5L849,1036.1L878,1029.9L907,1024.2L936,1018.8L965,1013.7L994,1008.6L1023,1003.1L1052,997.3L1081,991L1110,984.5L1139,978.1L1168,971.9L1197,966.2L1226,960.8L1255,955.7L1284,950.6L1313,945.1L1342,939.3L1371,933L1400,926.5" stroke="#fff" stroke-opacity="0.033"/><path d="M240,1167.7L269,1162.8L298,1157.5L327,1151.7L356,1145.4L385,1138.7L414,1131.9L443,1125.2L472,1118.9L501,1113.2L530,1107.9L559,1103L588,1098.3L617,1093.3L646,1088L675,1082.1L704,1075.7L733,1068.9L762,1062.1L791,1055.5L820,1049.3L849,1043.6L878,1038.4L907,1033.6L936,1028.8L965,1023.8L994,1018.4L1023,1012.4L1052,1006L1081,999.2L1110,992.4L1139,985.8L1168,979.7L1197,974.1L1226,969L1255,964.1L1284,959.3L1313,954.3L1342,948.8L1371,942.8L1400,936.2" stroke="#fff" stroke-opacity="0.038"/><path d="M240,1173.9L269,1168.5L298,1163L327,1157.4L356,1151.8L385,1146L414,1140.1L443,1134.1L472,1128.1L501,1121.9L530,1115.8L559,1109.6L588,1103.5L617,1097.4L646,1091.4L675,1085.5L704,1079.7L733,1074.1L762,1068.5L791,1063L820,1057.5L849,1052.1L878,1046.7L907,1041.2L936,1035.6L965,1030L994,1024.2L1023,1018.3L1052,1012.3L1081,1006.3L1110,1000.1L1139,994L1168,987.8L1197,981.7L1226,975.6L1255,969.6L1284,963.7L1313,957.9L1342,952.3L1371,946.7L1400,941.2" stroke="#000" stroke-opacity="0.048"/><path d="M240,1181.2L269,1175.5L298,1170L327,1164.5L356,1159.1L385,1153.7L414,1148.4L443,1143L472,1137.5L501,1131.9L530,1126.2L559,1120.4L588,1114.4L617,1108.3L646,1102.2L675,1095.9L704,1089.7L733,1083.4L762,1077.3L791,1071.2L820,1065.2L849,1059.4L878,1053.7L907,1048.2L936,1042.7L965,1037.3L994,1032L1023,1026.6L1052,1021.2L1081,1015.7L1110,1010.2L1139,1004.4L1168,998.6L1197,992.6L1226,986.5L1255,980.3L1284,974.1L1313,967.8L1342,961.6L1371,955.4L1400,949.4" stroke="#fff" stroke-opacity="0.036"/><path d="M240,1192.8L269,1186.6L298,1180.2L327,1173.8L356,1167.3L385,1160.9L414,1154.6L443,1148.5L472,1142.5L501,1136.8L530,1131.2L559,1125.8L588,1120.6L617,1115.4L646,1110.3L675,1105.1L704,1099.8L733,1094.3L762,1088.7L791,1082.8L820,1076.8L849,1070.6L878,1064.2L907,1057.8L936,1051.3L965,1044.9L994,1038.6L1023,1032.5L1052,1026.5L1081,1020.8L1110,1015.2L1139,1009.8L1168,1004.6L1197,999.4L1226,994.3L1255,989.1L1284,983.8L1313,978.3L1342,972.7L1371,966.8L1400,960.8" stroke="#000" stroke-opacity="0.038"/><path d="M240,1196.4L269,1192.3L298,1188L327,1183L356,1176.9L385,1169.9L414,1162.3L443,1155L472,1148.5L501,1143.1L530,1138.6L559,1134.5L588,1130.2L617,1125L646,1118.8L675,1111.6L704,1104.1L733,1096.9L762,1090.5L791,1085.3L820,1080.9L849,1076.8L878,1072.3L907,1067L936,1060.6L965,1053.4L994,1045.9L1023,1038.7L1052,1032.5L1081,1027.4L1110,1023.1L1139,1019L1168,1014.5L1197,1009L1226,1002.5L1255,995.1L1284,987.6L1313,980.6L1342,974.6L1371,969.6L1400,965.3" stroke="#000" stroke-opacity="0.042"/><path d="M240,1208.7L269,1202.4L298,1196.1L327,1189.9L356,1183.8L385,1177.9L414,1172.1L443,1166.4L472,1160.9L501,1155.5L530,1150.2L559,1144.9L588,1139.5L617,1134.2L646,1128.7L675,1123L704,1117.3L733,1111.3L762,1105.3L791,1099.1L820,1092.9L849,1086.6L878,1080.3L907,1074.1L936,1067.9L965,1061.9L994,1056.1L1023,1050.4L1052,1044.8L1081,1039.3L1110,1034L1139,1028.7L1168,1023.3L1197,1018L1226,1012.5L1255,1007L1284,1001.3L1313,995.4L1342,989.4L1371,983.3L1400,977.1" stroke="#fff" stroke-opacity="0.025"/><path d="M240,1216.1L269,1210.6L298,1205L327,1199.2L356,1193.3L385,1187.2L414,1181L443,1174.7L472,1168.4L501,1162.1L530,1155.9L559,1149.8L588,1143.9L617,1138.1L646,1132.4L675,1126.9L704,1121.5L733,1116.2L762,1111L791,1105.6L820,1100.2L849,1094.7L878,1089L907,1083.2L936,1077.2L965,1071.1L994,1064.9L1023,1058.6L1052,1052.3L1081,1046L1110,1039.8L1139,1033.7L1168,1027.8L1197,1022.1L1226,1016.5L1255,1011.1L1284,1005.7L1313,1000.4L1342,995.1L1371,989.8L1400,984.3" stroke="#000" stroke-opacity="0.033"/><path d="M240,1221.2L269,1215.3L298,1209.9L327,1204.8L356,1200.1L385,1195.3L414,1190.4L443,1185.2L472,1179.6L501,1173.5L530,1167L559,1160.2L588,1153.3L617,1146.6L646,1140.1L675,1134.1L704,1128.6L733,1123.4L762,1118.6L791,1113.9L820,1109.1L849,1103.9L878,1098.4L907,1092.4L936,1086L965,1079.2L994,1072.3L1023,1065.5L1052,1059L1081,1052.9L1110,1047.3L1139,1042.1L1168,1037.2L1197,1032.5L1226,1027.7L1255,1022.6L1284,1017.2L1313,1011.3L1342,1004.9L1371,998.2L1400,991.4" stroke="#fff" stroke-opacity="0.037"/><path d="M240,1233.3L269,1227.9L298,1222.6L327,1217.5L356,1212.5L385,1207.5L414,1202.4L443,1197.3L472,1192L501,1186.5L530,1180.9L559,1175L588,1168.8L617,1162.5L646,1156.1L675,1149.5L704,1142.9L733,1136.3L762,1129.8L791,1123.5L820,1117.3L849,1111.3L878,1105.6L907,1100L936,1094.7L965,1089.5L994,1084.5L1023,1079.5L1052,1074.5L1081,1069.4L1110,1064.2L1139,1058.8L1168,1053.2L1197,1047.4L1226,1041.4L1255,1035.2L1284,1028.8L1313,1022.3L1342,1015.7L1371,1009.1L1400,1002.6" stroke="#000" stroke-opacity="0.049"/><path d="M240,1246L269,1240.1L298,1234.1L327,1228L356,1221.8L385,1215.5L414,1209.2L443,1202.9L472,1196.7L501,1190.5L530,1184.5L559,1178.6L588,1172.8L617,1167.2L646,1161.7L675,1156.3L704,1150.9L733,1145.6L762,1140.3L791,1135L820,1129.5L849,1124L878,1118.4L907,1112.6L936,1106.7L965,1100.7L994,1094.5L1023,1088.3L1052,1082L1081,1075.7L1110,1069.4L1139,1063.2L1168,1057.1L1197,1051.1L1226,1045.2L1255,1039.5L1284,1033.8L1313,1028.3L1342,1022.9L1371,1017.6L1400,1012.3" stroke="#000" stroke-opacity="0.032"/><path d="M240,1252.2L269,1247.2L298,1242.1L327,1236.8L356,1231.3L385,1225.4L414,1219.3L443,1212.9L472,1206.4L501,1199.9L530,1193.5L559,1187.3L588,1181.5L617,1175.9L646,1170.6L675,1165.5L704,1160.4L733,1155.3L762,1149.9L791,1144.3L820,1138.3L849,1132.1L878,1125.7L907,1119.2L936,1112.7L965,1106.3L994,1100.3L1023,1094.5L1052,1089L1081,1083.8L1110,1078.7L1139,1073.7L1168,1068.5L1197,1063L1226,1057.3L1255,1051.2L1284,1044.9L1313,1038.4L1342,1031.9L1371,1025.5L1400,1019.2" stroke="#fff" stroke-opacity="0.025"/><path d="M240,1263.7L269,1258.5L298,1253.3L327,1248.1L356,1242.7L385,1237.3L414,1231.6L443,1225.8L472,1219.8L501,1213.6L530,1207.4L559,1201L588,1194.6L617,1188.2L646,1181.9L675,1175.6L704,1169.6L733,1163.7L762,1157.9L791,1152.4L820,1147L849,1141.7L878,1136.5L907,1131.3L936,1126.1L965,1120.8L994,1115.4L1023,1109.8L1052,1104L1081,1098.1L1110,1092L1139,1085.7L1168,1079.4L1197,1073L1226,1066.6L1255,1060.2L1284,1054L1313,1047.8L1342,1041.9L1371,1036.1L1400,1030.5" stroke="#fff" stroke-opacity="0.024"/><path d="M240,1277.1L269,1270.3L298,1263.6L327,1257.6L356,1252.2L385,1247.4L414,1242.6L443,1237.4L472,1231.5L501,1224.9L530,1218.1L559,1211.4L588,1205.4L617,1200L646,1195.2L675,1190.4L704,1185.2L733,1179.3L762,1172.7L791,1165.9L820,1159.2L849,1153.2L878,1147.8L907,1143L936,1138.2L965,1133L994,1127.1L1023,1120.5L1052,1113.7L1081,1107L1110,1101L1139,1095.6L1168,1090.8L1197,1086L1226,1080.8L1255,1074.9L1284,1068.4L1313,1061.5L1342,1054.8L1371,1048.8L1400,1043.4" stroke="#fff" stroke-opacity="0.033"/><path d="M240,1289.8L269,1283.4L298,1276.9L327,1270.5L356,1264.2L385,1258.1L414,1252.2L443,1246.5L472,1241L501,1235.6L530,1230.4L559,1225.3L588,1220.2L617,1215L646,1209.8L675,1204.4L704,1198.8L733,1192.9L762,1186.9L791,1180.7L820,1174.4L849,1167.9L878,1161.5L907,1155L936,1148.6L965,1142.3L994,1136.3L1023,1130.4L1052,1124.7L1081,1119.2L1110,1113.9L1139,1108.7L1168,1103.6L1197,1098.5L1226,1093.3L1255,1088L1284,1082.6L1313,1077L1342,1071.1L1371,1065.1L1400,1058.9" stroke="#fff" stroke-opacity="0.033"/><path d="M240,1296.9L269,1290.9L298,1284.8L327,1278.7L356,1272.5L385,1266.4L414,1260.3L443,1254.3L472,1248.3L501,1242.5L530,1236.8L559,1231.2L588,1225.7L617,1220.3L646,1214.8L675,1209.4L704,1203.9L733,1198.3L762,1192.6L791,1186.8L820,1180.9L849,1174.9L878,1168.8L907,1162.6L936,1156.5L965,1150.3L994,1144.2L1023,1138.2L1052,1132.3L1081,1126.5L1110,1120.8L1139,1115.3L1168,1109.8L1197,1104.3L1226,1098.9L1255,1093.4L1284,1087.9L1313,1082.3L1342,1076.6L1371,1070.8L1400,1064.9" stroke="#fff" stroke-opacity="0.022"/><path d="M240,1300.5L269,1294.6L298,1288.9L327,1283.5L356,1278.3L385,1273.3L414,1268.3L443,1263.3L472,1258.2L501,1252.9L530,1247.3L559,1241.5L588,1235.4L617,1229L646,1222.5L675,1215.8L704,1209.2L733,1202.7L762,1196.3L791,1190.2L820,1184.4L849,1178.9L878,1173.6L907,1168.5L936,1163.5L965,1158.5L994,1153.5L1023,1148.3L1052,1142.9L1081,1137.2L1110,1131.2L1139,1124.9L1168,1118.5L1197,1111.9L1226,1105.2L1255,1098.6L1284,1092.2L1313,1085.9L1342,1080L1371,1074.3L1400,1068.9" stroke="#fff" stroke-opacity="0.025"/><path d="M240,1311.1L269,1306.3L298,1301.5L327,1296.7L356,1291.6L385,1286.1L414,1280.1L443,1273.6L472,1266.9L501,1260.1L530,1253.2L559,1246.6L588,1240.4L617,1234.7L646,1229.4L675,1224.4L704,1219.6L733,1214.9L762,1210L791,1204.7L820,1199L849,1192.9L878,1186.4L907,1179.6L936,1172.7L965,1165.9L994,1159.5L1023,1153.4L1052,1147.8L1081,1142.6L1110,1137.8L1139,1133L1168,1128.2L1197,1123.2L1226,1117.8L1255,1112L1284,1105.7L1313,1099L1342,1092.2L1371,1085.3L1400,1078.6" stroke="#fff" stroke-opacity="0.043"/><path d="M240,1323.5L269,1318.1L298,1312.4L327,1306.6L356,1300.6L385,1294.3L414,1288L443,1281.5L472,1275.1L501,1268.7L530,1262.4L559,1256.2L588,1250.3L617,1244.6L646,1239.1L675,1233.7L704,1228.5L733,1223.3L762,1218.2L791,1213L820,1207.7L849,1202.2L878,1196.5L907,1190.5L936,1184.4L965,1178.1L994,1171.7L1023,1165.3L1052,1158.8L1081,1152.5L1110,1146.2L1139,1140.2L1168,1134.3L1197,1128.7L1226,1123.2L1255,1117.9L1284,1112.7L1313,1107.6L1342,1102.4L1371,1097.2L1400,1091.8" stroke="#000" stroke-opacity="0.052"/><path d="M240,1335.9L269,1330.3L298,1324.5L327,1318.4L356,1312.2L385,1305.9L414,1299.5L443,1293L472,1286.5L501,1280.1L530,1273.9L559,1267.8L588,1261.8L617,1256.1L646,1250.6L675,1245.2L704,1240L733,1234.8L762,1229.7L791,1224.5L820,1219.3L849,1213.9L878,1208.4L907,1202.7L936,1196.8L965,1190.7L994,1184.4L1023,1178.1L1052,1171.6L1081,1165.1L1110,1158.7L1139,1152.3L1168,1146.1L1197,1140.1L1226,1134.2L1255,1128.6L1284,1123.1L1313,1117.8L1342,1112.6L1371,1107.5L1400,1102.3" stroke="#fff" stroke-opacity="0.040"/></g></g>
<path d="M980.5 335.5L985.6 329.5L991 335" fill="none" stroke="#3a3a00" stroke-opacity="0.7" stroke-width="1.3"/><path d="M982 336.5L985.6 331.5L989.5 336.5L987 339.5L984 339.5z" fill="#eee030" fill-opacity="0.85"/><path d="M918 478.5Q945 475.5 974 482.5" fill="none" stroke="#c8f070" stroke-opacity="0.55" stroke-width="2.2"/><path d="M922 481.5Q948 480 972 485.5" fill="none" stroke="#3c7000" stroke-opacity="0.5" stroke-width="1.2"/><path d="M702 684Q722 676 745 694" fill="none" stroke="#0a4a10" stroke-opacity="0.45" stroke-width="1.6"/><path d="M704 687Q724 680 741 697" fill="none" stroke="#b0ffb0" stroke-opacity="0.25" stroke-width="2"/><ellipse cx="615" cy="923" rx="4.5" ry="5.5" fill="#40c8f0" fill-opacity="0.55"/><path d="M610 920Q613 928 620 929" fill="none" stroke="#004060" stroke-opacity="0.45" stroke-width="1.3"/><ellipse cx="634" cy="866" rx="3.5" ry="3" fill="#40e0d8" fill-opacity="0.35"/><path d="M1310 656Q1316 653 1322 659" fill="none" stroke="#004080" stroke-opacity="0.3" stroke-width="1.2"/>
<g stroke="#ececec" stroke-width="1.1" fill="none"><path d="M234.6,388.3L933.7,164.1" /><path d="M933.7,164.1L1422.3,542.6" /><path d="M258.3,589.9L234.6,388.3" /><path d="M1398,750.2L1422.3,542.6" /><path d="M934 155.5V169"/><path d="M258.3,589.9L658.3,1067.5" /><path d="M658.3,1067.5L1398,750.2" /><path d="M258.3,589.9L234.8,598.1" /><path d="M1398,750.2L1417.2,742" /><path d="M256.1,570.5L244.2,574.6" /><path d="M1400.4,730.2L1410,726.1" /><path d="M253.7,550.9L230,559" /><path d="M1402.7,710.1L1422,701.9" /><path d="M251.4,531.1L239.5,535.2" /><path d="M1405.1,689.8L1414.8,685.7" /><path d="M249.1,511.2L225.1,519.3" /><path d="M1407.5,669.3L1427,661.2" /><path d="M246.7,491.1L234.7,495.1" /><path d="M1409.9,648.6L1419.7,644.6" /><path d="M244.3,470.9L220.2,478.9" /><path d="M1412.4,627.8L1432,619.7" /><path d="M241.9,450.5L229.8,454.5" /><path d="M1414.8,606.8L1424.7,602.7" /><path d="M239.5,429.9L215.1,437.9" /><path d="M1417.3,585.6L1437.1,577.5" /><path d="M237.1,409.2L224.8,413.1" /><path d="M1419.8,564.2L1429.7,560.2" /><path d="M234.6,388.3L210,396.1" /><path d="M1422.3,542.6L1442.2,534.7" /><path d="M1398,750.2L1413.3,763" /><path d="M1330.7,779.1L1337.7,785.2" /><path d="M1261.9,808.6L1276.9,821.9" /><path d="M1191.8,838.7L1198.7,845" /><path d="M1120.3,869.3L1134.9,883.3" /><path d="M1047.3,900.7L1053.9,907.2" /><path d="M972.7,932.6L986.9,947.1" /><path d="M896.6,965.3L903.1,972.2" /><path d="M818.9,998.6L832.6,1013.8" /><path d="M739.4,1032.7L745.7,1039.9" /><path d="M658.3,1067.5L671.5,1083.3" /><path d="M292.8,631.2L293.5,637" /><path d="M328.4,673.6L329,679.5" /><path d="M365.1,717.4L365.7,723.4" /><path d="M403,762.7L403.5,768.6" /><path d="M442.1,809.3L442.6,815.3" /><path d="M482.5,857.6L482.9,863.6" /><path d="M524.2,907.4L524.6,913.5" /><path d="M567.4,959L567.7,965.1" /><path d="M612,1012.3L612.4,1018.4" /></g>
<g fill="#e4e4e4" stroke="#e4e4e4" stroke-width="0.45" font-family="Liberation Mono" font-size="13.5" text-anchor="middle" letter-spacing="1.5"><text transform="translate(198.7 426.7) rotate(-17) skewX(-8)" x="0" y="4.5">-2.3</text><text transform="translate(208 507.7) rotate(-17) skewX(-8)" x="0" y="4.5">-4.7</text><text transform="translate(217.6 588.7) rotate(-17) skewX(-8)" x="0" y="4.5">-7.1</text><text transform="translate(191.5 618) rotate(-22) skewX(-8)" x="0" y="4.5">X(µm)</text><text transform="translate(264.3 650) rotate(-19) skewX(-8)" x="0" y="4.5">25.1</text><text transform="translate(420 826.7) rotate(-21) skewX(-8)" x="0" y="4.5">125.5</text><text transform="translate(588 1032.8) rotate(-21.8) skewX(-8)" x="0" y="4.5">225.9</text><text transform="translate(1449.4 558.8) rotate(-17) skewX(-8)" x="0" y="4.5">-2.3</text><text transform="translate(1439 641.9) rotate(-17) skewX(-8)" x="0" y="4.5">-4.7</text><text transform="translate(1427.9 724.4) rotate(-17) skewX(-8)" x="0" y="4.5">-7.1</text><text transform="translate(1449.4 768) rotate(-22) skewX(-8)" x="0" y="4.5">Y(µm)</text><text transform="translate(1354.4 786.2) rotate(-21) skewX(-8)" x="0" y="4.5">25.1</text><text transform="translate(1080.6 903) rotate(-21) skewX(-8)" x="0" y="4.5">125.5</text><text transform="translate(774.4 1035.7) rotate(-21.8) skewX(-8)" x="0" y="4.5">225.9</text><text transform="translate(898 151) rotate(-17) skewX(-8)" x="0" y="4.5">Z(µm)</text></g>
</svg>
</div>
<div id="bot"></div>
<div id="scr"></div><div id="thumb"></div>
<div id="rp">
<svg width="312" height="1089">
<path d="M312 849L72 1089H312z" fill="#e7e7e7"/>
<g transform="translate(35.8 137.75)" fill="#555"><path d="M19 8H5c-1.66 0-3 1.34-3 3v6h4v4h12v-4h4v-6c0-1.66-1.34-3-3-3zm-3 11H8v-5h8v5zm3-7c-.55 0-1-.45-1-1s.45-1 1-1 1 .45 1 1-.45 1-1 1zm-1-9H6v4h12V3z"/></g>
<g transform="translate(281.9 178.3)" fill="#555"><path d="M20 6h-8l-2-2H4c-1.1 0-1.99.9-1.99 2L2 18c0 1.1.9 2 2 2h16c1.1 0 2-.9 2-2V8c0-1.1-.9-2-2-2zm0 12H4V8h16v10z"/></g>
<g transform="translate(281.9 220.5)" fill="#555"><path d="M20 6h-8l-2-2H4c-1.1 0-1.99.9-1.99 2L2 18c0 1.1.9 2 2 2h16c1.1 0 2-.9 2-2V8c0-1.1-.9-2-2-2zm0 12H4V8h16v10z"/></g>
<g fill="none" stroke="#c43c3c" stroke-width="1.5" stroke-linecap="round" transform="translate(-1608 -48)">
<path d="M1655.3 232L1659.8 239.6L1662.2 241M1655.3 232L1654.6 236.2L1650 245.2M1651.8 241.4L1662.4 240.2"/>
<circle cx="1655.3" cy="230.2" r="1.6"/>
<circle cx="1649.4" cy="246" r="1.5"/>
<circle cx="1663.4" cy="240.8" r="1.5"/>
</g>
<text x="48.5" y="239.6" text-anchor="middle" font-family="Liberation Serif" font-weight="bold" font-size="21" fill="#2c8c30">X</text>

</svg>
<div id="btn"><svg width="240" height="36" style="position:absolute;left:0;top:0"><g transform="translate(30.5 7) scale(0.88)" fill="#fff"><path d="M20 11H7.83l5.59-5.59L12 4l-8 8 8 8 1.41-1.41L7.83 13H20v-2z"/></g></svg><span>NEW MEASUREMENT</span></div>
<div class="it" style="top:141px">Print</div>
<div class="it" style="top:181px">Print to PDF</div>
<div class="it" style="top:223px">Export to Excel</div>
</div>
</body></html>
